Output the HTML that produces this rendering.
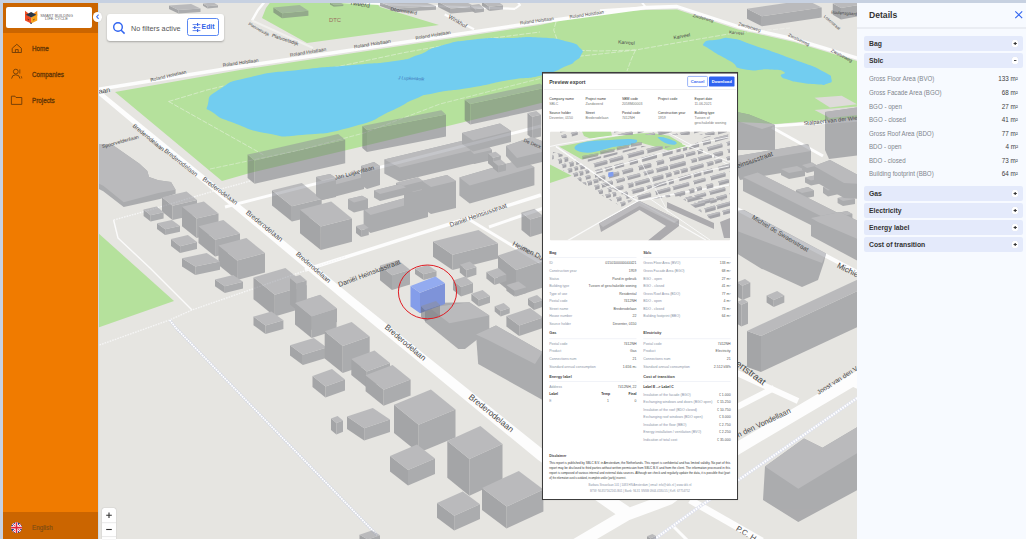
<!DOCTYPE html><html><head><meta charset="utf-8"><title>SBLC map</title><style>

*{margin:0;padding:0;box-sizing:border-box}
html,body{width:1026px;height:541px;overflow:hidden;background:#fff;font-family:"Liberation Sans",sans-serif}
#frame{position:absolute;left:0;top:0;width:1026px;height:539px;background:#c7d1e1}
#map{position:absolute;left:97px;top:3px;width:760px;height:536px;overflow:hidden;background:#e6e5e1}
#map svg{position:absolute;left:-97px;top:-3px}
#side{position:absolute;left:3px;top:3px;width:94.6px;height:536px;background:#f07b00}
#side .hdr{position:absolute;left:0;top:0;width:94.6px;height:30px;background:#cb6500}
#side .logo{position:absolute;left:3px;top:4px;width:86px;height:21px;background:#fff;border-radius:2px}
#side .ftr{position:absolute;left:0;top:509px;width:94.6px;height:27px;background:#cb6500}
.nav{position:absolute;left:29px;font-size:7px;font-weight:normal;color:#633505;letter-spacing:0;transform:scaleX(0.9);transform-origin:0 50%;-webkit-text-stroke:0.3px #633505}
.collapse{position:absolute;left:92.7px;top:12.2px;width:9.8px;height:9.8px;border-radius:50%;background:#fff;box-shadow:0 0 1px rgba(0,0,0,.2)}
#panel{position:absolute;left:857px;top:3px;width:169px;height:536px;background:#f7faff}
#panel .ttl{position:absolute;left:12px;top:6.5px;font-size:8.6px;font-weight:bold;color:#333}
#panel .div{position:absolute;left:0;top:24.2px;width:169px;height:1.4px;background:#eaedf3}
.bar{position:absolute;left:7px;width:159px;height:15px;background:#e4eafb;border-radius:2px}
.bar span{position:absolute;left:5px;top:4px;font-size:6.8px;font-weight:bold;color:#333}
.bar i{position:absolute;left:148px;top:4.2px;width:6.4px;height:7px;background:#fff;border-radius:1.5px;box-shadow:0 0 0.6px rgba(0,0,0,.18)}
.row{position:absolute;left:12px;width:149px;font-size:7px;color:#80858d;height:9px}
.row span{position:absolute;left:0;top:0;transform:scaleX(0.88);transform-origin:0 50%;white-space:nowrap}
.row b{position:absolute;right:0;top:0;font-weight:normal;color:#404040;transform:scaleX(0.9);transform-origin:100% 50%;white-space:nowrap}
#search{position:absolute;left:107px;top:14px;width:117px;height:27px;background:#fff;border-radius:3px;box-shadow:0 1px 2px rgba(0,0,0,.28)}
#search .txt{position:absolute;left:24px;top:9.5px;font-size:7.25px;color:#555}
#search .edit{position:absolute;left:80px;top:4.2px;width:32px;height:18.2px;border:1px solid #5a88f2;border-radius:2.5px}
#search .edit span{position:absolute;left:13.6px;top:4.2px;font-size:6.8px;font-weight:bold;color:#2f5fe8}
#zoom{position:absolute;left:102px;top:508px;width:14px;height:31px;background:#fff;border-radius:2px 2px 0 0;box-shadow:0 0 1px rgba(0,0,0,.35)}

</style></head><body>
<div id="frame"></div>
<div id="map"><svg width="1026" height="541" viewBox="0 0 1026 541"><rect x="0" y="0" width="1026" height="541" fill="#e6e5e1"/><polygon points="115,92 240,70 540,25 600,12 646,10 677,9.5 738,29.5 794,42 860,62 860,117 776,124 738,122 541,103 452,125 364,146 250,173 222,181" fill="#b5e19c"/><polygon points="272,0 374,0 380,7 439,25 307,43 262,18 266,8" fill="#b5e19c"/><polygon points="97,232 174,301 97,328" fill="#b5e19c"/><polygon points="814.5,97.8 841.7,95.8 857,104.2 829.9,107.5" fill="#dedbd9"/><polygon points="814.5,110 857,106.5 857,115 830,118" fill="#dedbd9"/><path d="M168.6 101.5 L207 90 L240 82 L328 68.7 L404 52.6 L470 41 L540 32" stroke="#f4f6f1" stroke-width="0.8" fill="none" stroke-linejoin="round" stroke-dasharray="5 1.5" opacity="0.6"/><path d="M168.6 101.5 L263.4 154.8" stroke="#f4f6f1" stroke-width="0.8" fill="none" stroke-linejoin="round" stroke-dasharray="5 1.5" opacity="0.6"/><path d="M210 169 L300 150 L364 133 L440 104 L542 78" stroke="#f4f6f1" stroke-width="0.7" fill="none" stroke-linejoin="round" stroke-dasharray="5 1.5" opacity="0.6"/><path d="M556 22 L553.7 30 L558 42 L568 50 L600 51 L635.5 50 L681.5 42 L731.7 33.5 L790 28" stroke="#f4f6f1" stroke-width="0.8" fill="none" stroke-linejoin="round" stroke-dasharray="5 1.5" opacity="0.6"/><path d="M635.5 50 L631 60 L627 71" stroke="#f4f6f1" stroke-width="0.8" fill="none" stroke-linejoin="round" stroke-dasharray="5 1.5" opacity="0.6"/><path d="M430 71 L500 64 L556 58.7 L600 54 L635.5 50" stroke="#f4f6f1" stroke-width="0.8" fill="none" stroke-linejoin="round" stroke-dasharray="5 1.5" opacity="0.6"/><path d="M208 104 C210.1 96 205.7 98 220 89 C234.3 80 223.7 83.5 251 77 C278.3 70.5 268 73.6 302 69.6 C336 65.6 322 67.9 353 65 C384 62.1 373.3 64.3 395 61 C416.7 57.7 403 60 418 55 C433 50 421.3 51.2 440 46 C458.7 40.8 451 42.2 474 39.5 C497 36.8 487 38.7 509 38 C531 37.3 520.7 36.3 540 37.5 C559.3 38.7 553.7 38 567 41.5 C580.3 45 575.3 43.5 580 48 C584.7 52.5 582.7 50.7 581 55 C579.3 59.3 579.7 57.4 575 61 C570.3 64.6 578.3 61 567 65.8 C555.7 70.6 560.3 70.7 541 75.4 C521.7 80.1 531.7 76 509 80 C486.3 84 497.7 83 473 87.3 C448.3 91.6 454.3 89.1 435 93 C415.7 96.9 429.7 93 415 99 C400.3 105 411.5 101.8 391 111 C370.5 120.2 383.2 118.5 353.5 126.5 C323.8 134.5 330.5 132.7 302 135 C273.5 137.3 290.7 137.4 268 133.4 C245.3 129.4 252.1 129.8 234 123 C215.9 116.2 222.3 119.3 213.6 113 C204.9 106.7 205.9 112 208 104Z" fill="#72cdf0"/><path d="M704 43 C706.3 39.5 708.3 40.9 718 39.5 C727.7 38.1 720.7 36.7 733 38.8 C745.3 40.9 734.7 38.8 755 45.7 C775.3 52.6 771.8 51.3 794 59.6 C816.2 67.9 809.2 64.2 821.7 70.7 C834.2 77.2 830 74.6 831.4 79 C832.8 83.4 830.1 82.2 826 84 C821.9 85.8 827.7 85 819 84.5 C810.3 84 810 84 800 82.5 C790 81 795.3 82.2 789 80 C782.7 77.8 782.7 78.7 781 76 C779.3 73.3 787.7 74.2 784 72 C780.3 69.8 783.3 70.4 770 69.5 C756.7 68.6 757.3 72.1 744 69.3 C730.7 66.5 741 67.4 730 61 C719 54.6 719.7 56 711 50 C702.3 44 701.7 46.5 704 43Z" fill="#72cdf0"/><path d="M97 89.5 L240 66.5 L540 22 L646 7.5 L677 6.5 L738 26.5 L794 39 L860 59" stroke="#fdfdfd" stroke-width="3.4" fill="none" stroke-linejoin="round"/><path d="M600 10.5 L646 7.5" stroke="#fdfdfd" stroke-width="2.5" fill="none" stroke-linejoin="round"/><path d="M266 0 L258 10 L252 20.5" stroke="#fdfdfd" stroke-width="2.4" fill="none" stroke-linejoin="round"/><path d="M252 20.5 L313 48" stroke="#f1f1ee" stroke-width="2" fill="none" stroke-linejoin="round"/><path d="M340 2 L400 5 L515 8.8" stroke="#fdfdfd" stroke-width="2.2" fill="none" stroke-linejoin="round"/><path d="M444.7 14.6 L474 29.2" stroke="#fdfdfd" stroke-width="2.2" fill="none" stroke-linejoin="round"/><path d="M515 8.8 L520 5 L516 0" stroke="#fdfdfd" stroke-width="2" fill="none" stroke-linejoin="round"/><path d="M640 0 L646 7.5" stroke="#fdfdfd" stroke-width="2" fill="none" stroke-linejoin="round"/><polygon points="95.6,92.7 347.3,303.3 537.8,459.7 622.1,518.8 629.9,507.2 544.2,450.3 352.7,296.7 98.4,89.3" fill="#fdfdfd"/><path d="M225 207 L541 126" stroke="#fdfdfd" stroke-width="3" fill="none" stroke-linejoin="round"/><path d="M305 270 L541 195" stroke="#fdfdfd" stroke-width="3.5" fill="none" stroke-linejoin="round"/><path d="M470 220 L541 263" stroke="#fdfdfd" stroke-width="3" fill="none" stroke-linejoin="round"/><path d="M489 227 L544 208" stroke="#fdfdfd" stroke-width="3" fill="none" stroke-linejoin="round"/><path d="M774 126 L860 120" stroke="#fdfdfd" stroke-width="3" fill="none" stroke-linejoin="round"/><path d="M772 127.5 L823 156" stroke="#fdfdfd" stroke-width="3" fill="none" stroke-linejoin="round"/><path d="M737 209 L860 273.7" stroke="#fdfdfd" stroke-width="4" fill="none" stroke-linejoin="round"/><path d="M737 373 L798 401" stroke="#fdfdfd" stroke-width="6" fill="none" stroke-linejoin="round"/><path d="M737 407 L774 388" stroke="#fdfdfd" stroke-width="6" fill="none" stroke-linejoin="round"/><path d="M575 545 L626 515 L669 499 L738 448 L860 376" stroke="#fdfdfd" stroke-width="12" fill="none" stroke-linejoin="round"/><path d="M690 500 L762 541" stroke="#fdfdfd" stroke-width="7" fill="none" stroke-linejoin="round"/><path d="M673 526 L688 541" stroke="#fdfdfd" stroke-width="3" fill="none" stroke-linejoin="round"/><path d="M845 381 L860 388" stroke="#fdfdfd" stroke-width="4" fill="none" stroke-linejoin="round"/><path d="M652 541 L699 507 L737 481 L860 396" stroke="#dfe2ee" stroke-width="3.2" fill="none" stroke-linejoin="round"/><path d="M652 541 L699 507 L737 481 L860 396" stroke="#ffffff" stroke-width="2.2" fill="none" stroke-linejoin="round" stroke-dasharray="1.6 1.1"/><path d="M113.6 220 L118 238 L150 268 L192 310" stroke="#fbfbfb" stroke-width="1.4" fill="none" stroke-linejoin="round"/><path d="M113.6 220 L150 210 L207 193 L250 181" stroke="#f6f6f6" stroke-width="1.3" fill="none" stroke-linejoin="round" stroke-dasharray="1.6 1.1"/><path d="M99.5 345 L169.6 320 L192 310 L307 270 L345 257" stroke="#f6f6f6" stroke-width="1.3" fill="none" stroke-linejoin="round" stroke-dasharray="1.6 1.1"/><path d="M169.6 320 L176 328 L270 425 L377.4 535.4" stroke="#d3d7e3" stroke-width="2.8" fill="none" stroke-linejoin="round"/><path d="M169.6 320 L176 328 L270 425 L377.4 535.4" stroke="#ffffff" stroke-width="1.8" fill="none" stroke-linejoin="round" stroke-dasharray="1.8 0.7"/><g opacity="0.5"><polygon points="169,5.4 178.4,9.9 178.4,13.5 169,9" fill="#64666e"/><polygon points="178.4,9.9 200.5,8.5 200.5,12.1 178.4,13.5" fill="#72747c"/><polygon points="169,5.4 191.1,4 200.5,8.5 178.4,9.9" fill="#8f9199"/><polygon points="203,3.4 207.5,6.2 207.5,8.5 203,5.7" fill="#64666e"/><polygon points="207.5,6.2 218,5.3 218,7.6 207.5,8.5" fill="#72747c"/><polygon points="203,3.4 213.5,2.5 218,5.3 207.5,6.2" fill="#8f9199"/><polygon points="273.4,7.6 282.1,13.2 282.1,18.3 273.4,12.6" fill="#64666e"/><polygon points="282.1,13.2 308.4,10.7 308.4,15.7 282.1,18.3" fill="#72747c"/><polygon points="273.4,7.6 299.6,5 308.4,10.7 282.1,13.2" fill="#8f9199"/><polygon points="330,2.7 334,4.9 334,6.7 330,4.5" fill="#64666e"/><polygon points="334,4.9 343.3,4.2 343.3,6 334,6.7" fill="#72747c"/><polygon points="330,2.7 339.3,2 343.3,4.2 334,4.9" fill="#8f9199"/><polygon points="380,2.2 396.8,8.4 396.8,12 380,5.9" fill="#64666e"/><polygon points="396.8,8.4 436,6.1 436,9.8 396.8,12" fill="#72747c"/><polygon points="380,2.2 419.2,0 436,6.1 396.8,8.4" fill="#8f9199"/><polygon points="438,1.9 450.9,8.4 450.9,13.5 438,7.1" fill="#64666e"/><polygon points="450.9,8.4 475,6.4 475,11.6 450.9,13.5" fill="#72747c"/><polygon points="438,1.9 462.1,0 475,6.4 450.9,8.4" fill="#8f9199"/><polygon points="470,5.2 474.9,9.2 474.9,13 470,9" fill="#64666e"/><polygon points="474.9,9.2 484,8 484,11.8 474.9,13" fill="#72747c"/><polygon points="470,5.2 479.1,4 484,8 474.9,9.2" fill="#8f9199"/><polygon points="482,1.6 489.4,6.8 489.4,11 482,5.8" fill="#64666e"/><polygon points="489.4,6.8 503,5.2 503,9.4 489.4,11" fill="#72747c"/><polygon points="482,1.6 495.6,0 503,5.2 489.4,6.8" fill="#8f9199"/><polygon points="747,8.7 761.9,16.3 761.9,26.3 747,18.7" fill="#64666e"/><polygon points="761.9,16.3 821.7,7.6 821.7,17.6 761.9,26.3" fill="#72747c"/><polygon points="747,8.7 806.8,0 821.7,7.6 761.9,16.3" fill="#8f9199"/><polygon points="832.8,3.5 841,8.1 841,19.4 832.8,14.8" fill="#64666e"/><polygon points="841,8.1 860,4.6 860,15.9 841,19.4" fill="#72747c"/><polygon points="832.8,3.5 851.8,0 860,4.6 841,8.1" fill="#8f9199"/><polygon points="247.6,154.6 254.6,160.4 254.6,183.8 247.6,178" fill="#64666e"/><polygon points="254.6,160.4 345.2,139.8 345.2,163.2 254.6,183.8" fill="#72747c"/><polygon points="247.6,154.6 338.2,134 345.2,139.8 254.6,160.4" fill="#8f9199"/><polygon points="362.3,125.9 367,130 367,152 362.3,147.9" fill="#64666e"/><polygon points="367,130 446,114.4 446,136.4 367,152" fill="#72747c"/><polygon points="362.3,125.9 441.3,110.3 446,114.4 367,130" fill="#8f9199"/><polygon points="464.7,99.8 470.3,104 470.3,124.5 464.7,120.3" fill="#64666e"/><polygon points="470.3,104 545.6,87.7 545.6,108.2 470.3,124.5" fill="#72747c"/><polygon points="464.7,99.8 540,83.5 545.6,87.7 470.3,104" fill="#8f9199"/><polygon points="97,144 112.7,145 139.5,163.8 147.3,170.9 149,177 158.3,180.3 171,182 175.6,189.7 175.6,193.7 160,199 123.7,207 103.3,191.3 97,188" fill="#72747c"/><polygon points="97,144 112.7,145 139.5,163.8 147.3,170.9 149,177 158.3,180.3 171,182 175.6,189.7 158.3,193 123.7,202.3 103.3,185.8 97,182.7" fill="#8f9199"/><polygon points="162,197.2 172.5,205.7 172.5,220 162,211.5" fill="#64666e"/><polygon points="172.5,205.7 197,200.1 197,214.4 172.5,220" fill="#72747c"/><polygon points="162,197.2 186.5,191.6 197,200.1 172.5,205.7" fill="#8f9199"/><polygon points="182,206.8 196.6,218.6 196.6,238 182,226.2" fill="#64666e"/><polygon points="196.6,218.6 218.5,213.4 218.5,232.8 196.6,238" fill="#72747c"/><polygon points="182,206.8 203.9,201.6 218.5,213.4 196.6,218.6" fill="#8f9199"/><polygon points="198.5,226.3 215.1,239.7 215.1,256.5 198.5,243.1" fill="#64666e"/><polygon points="215.1,239.7 240,233.4 240,250.2 215.1,256.5" fill="#72747c"/><polygon points="198.5,226.3 223.4,220 240,233.4 215.1,239.7" fill="#8f9199"/><polygon points="218.5,245.5 237.1,260.5 237.1,280 218.5,264.9" fill="#64666e"/><polygon points="237.1,260.5 265,253.1 265,272.5 237.1,280" fill="#72747c"/><polygon points="218.5,245.5 246.4,238 265,253.1 237.1,260.5" fill="#8f9199"/><polygon points="253.5,277.4 274.8,294.7 274.8,316.4 253.5,299.2" fill="#64666e"/><polygon points="274.8,294.7 306.7,285.2 306.7,307 274.8,316.4" fill="#72747c"/><polygon points="253.5,277.4 285.4,268 306.7,285.2 274.8,294.7" fill="#8f9199"/><polygon points="295,302.7 311.8,316.3 311.8,330 295,316.4" fill="#64666e"/><polygon points="311.8,316.3 337,308.4 337,322.1 311.8,330" fill="#72747c"/><polygon points="295,302.7 320.2,294.8 337,308.4 311.8,316.3" fill="#8f9199"/><polygon points="253.5,316.6 265.5,325.4 265.5,334 253.5,325.2" fill="#64666e"/><polygon points="265.5,325.4 283.4,320.3 283.4,328.9 265.5,334" fill="#72747c"/><polygon points="253.5,316.6 271.4,311.5 283.4,320.3 265.5,325.4" fill="#8f9199"/><polygon points="143.6,209.6 150.6,215.2 150.6,221.6 143.6,215.9" fill="#64666e"/><polygon points="150.6,215.2 163.6,212.3 163.6,218.6 150.6,221.6" fill="#72747c"/><polygon points="143.6,209.6 156.6,206.6 163.6,212.3 150.6,215.2" fill="#8f9199"/><polygon points="157,223.3 165.1,229.3 165.1,235 157,229" fill="#64666e"/><polygon points="165.1,229.3 180,226 180,231.7 165.1,235" fill="#72747c"/><polygon points="157,223.3 171.9,220 180,226 165.1,229.3" fill="#8f9199"/><polygon points="171,239.1 180.1,246.2 180.1,253 171,245.9" fill="#64666e"/><polygon points="180.1,246.2 197,242.1 197,248.9 180.1,253" fill="#72747c"/><polygon points="171,239.1 187.9,235 197,242.1 180.1,246.2" fill="#8f9199"/><polygon points="182,258.2 195.3,266.6 195.3,275 182,266.5" fill="#64666e"/><polygon points="195.3,266.6 220,261.5 220,269.8 195.3,275" fill="#72747c"/><polygon points="182,258.2 206.7,253 220,261.5 195.3,266.6" fill="#8f9199"/><polygon points="215,279.4 224.8,286.2 224.8,293 215,286.2" fill="#64666e"/><polygon points="224.8,286.2 243,281.8 243,288.6 224.8,293" fill="#72747c"/><polygon points="215,279.4 233.2,275 243,281.8 224.8,286.2" fill="#8f9199"/><polygon points="272,190.2 291.9,206.3 291.9,221.6 272,205.5" fill="#64666e"/><polygon points="291.9,206.3 321.7,199.1 321.7,214.4 291.9,221.6" fill="#72747c"/><polygon points="272,190.2 301.8,183 321.7,199.1 291.9,206.3" fill="#8f9199"/><polygon points="527.5,113 532.2,116.8 532.2,138.5 527.5,134.7" fill="#64666e"/><polygon points="532.2,116.8 541,114.8 541,136.5 532.2,138.5" fill="#72747c"/><polygon points="527.5,113 536.3,111 541,114.8 532.2,116.8" fill="#8f9199"/><polygon points="521.5,212.6 530.1,219.5 530.1,237 521.5,230" fill="#64666e"/><polygon points="530.1,219.5 543,215.7 543,233.1 530.1,237" fill="#72747c"/><polygon points="521.5,212.6 534.4,208.7 543,215.7 530.1,219.5" fill="#8f9199"/><polygon points="433,241.6 452.5,254.8 452.5,270 433,256.8" fill="#64666e"/><polygon points="452.5,254.8 498,243.2 498,258.4 452.5,270" fill="#72747c"/><polygon points="433,241.6 478.5,230 498,243.2 452.5,254.8" fill="#8f9199"/><polygon points="498,255.5 516,270 516,296.5 498,281.9" fill="#64666e"/><polygon points="516,270 543,261.1 543,287.5 516,296.5" fill="#72747c"/><polygon points="498,255.5 525,246.5 543,261.1 516,270" fill="#8f9199"/><polygon points="380,265.5 392,275.2 392,290 380,280.3" fill="#64666e"/><polygon points="392,275.2 410,269.7 410,284.5 392,290" fill="#72747c"/><polygon points="380,265.5 398,260 410,269.7 392,275.2" fill="#8f9199"/><polygon points="415,268.4 423.6,274.3 423.6,280 415,274.1" fill="#64666e"/><polygon points="423.6,274.3 436.5,270.9 436.5,276.6 423.6,280" fill="#72747c"/><polygon points="415,268.4 427.9,265 436.5,270.9 423.6,274.3" fill="#8f9199"/><polygon points="459.8,264.7 466.4,270.1 466.4,278 459.8,272.6" fill="#64666e"/><polygon points="466.4,270.1 476.4,266.9 476.4,274.8 466.4,278" fill="#72747c"/><polygon points="459.8,264.7 469.8,261.5 476.4,266.9 466.4,270.1" fill="#8f9199"/><polygon points="486.4,272 494.4,278.4 494.4,285 486.4,278.5" fill="#64666e"/><polygon points="494.4,278.4 506.4,274.5 506.4,281 494.4,285" fill="#72747c"/><polygon points="486.4,272 498.4,268 506.4,274.5 494.4,278.4" fill="#8f9199"/><polygon points="453,280.5 461,286.9 461,296.5 453,290" fill="#64666e"/><polygon points="461,286.9 473,283 473,292.5 461,296.5" fill="#72747c"/><polygon points="453,280.5 465,276.5 473,283 461,286.9" fill="#8f9199"/><polygon points="471.4,293.8 478.8,299.8 478.8,306.5 471.4,300.5" fill="#64666e"/><polygon points="478.8,299.8 490,296 490,302.7 478.8,306.5" fill="#72747c"/><polygon points="471.4,293.8 482.6,290 490,296 478.8,299.8" fill="#8f9199"/><polygon points="506.4,285.1 514.4,290.8 514.4,296.5 506.4,290.8" fill="#64666e"/><polygon points="514.4,290.8 526.4,287.2 526.4,292.9 514.4,296.5" fill="#72747c"/><polygon points="506.4,285.1 518.4,281.5 526.4,287.2 514.4,290.8" fill="#8f9199"/><polygon points="528,298.2 534,303.1 534,310 528,305.1" fill="#64666e"/><polygon points="534,303.1 543,299.9 543,306.8 534,310" fill="#72747c"/><polygon points="528,298.2 537,295 543,299.9 534,303.1" fill="#8f9199"/><polygon points="494.7,306.2 500.7,311.1 500.7,316.4 494.7,311.5" fill="#64666e"/><polygon points="500.7,311.1 509.7,307.9 509.7,313.2 500.7,316.4" fill="#72747c"/><polygon points="494.7,306.2 503.7,303 509.7,307.9 500.7,311.1" fill="#8f9199"/><polygon points="506.4,316 519.2,325.4 519.2,336 506.4,326.6" fill="#64666e"/><polygon points="519.2,325.4 543,317.4 543,328 519.2,336" fill="#72747c"/><polygon points="506.4,316 530.2,308 543,317.4 519.2,325.4" fill="#8f9199"/><polygon points="290,278 296.6,283.4 296.6,310 290,304.6" fill="#64666e"/><polygon points="296.6,283.4 306.6,280.4 306.6,307 296.6,310" fill="#72747c"/><polygon points="290,278 300,275 306.6,280.4 296.6,283.4" fill="#8f9199"/><polygon points="295,302.9 311.6,316.4 311.6,338 295,324.5" fill="#64666e"/><polygon points="311.6,316.4 336.6,308.5 336.6,330.1 311.6,338" fill="#72747c"/><polygon points="295,302.9 320,295 336.6,308.5 311.6,316.4" fill="#8f9199"/><polygon points="290,345.3 302.9,354.7 302.9,365 290,355.6" fill="#64666e"/><polygon points="302.9,354.7 326.8,347.4 326.8,357.7 302.9,365" fill="#72747c"/><polygon points="290,345.3 313.9,338 326.8,347.4 302.9,354.7" fill="#8f9199"/><polygon points="324.7,331.3 342.7,345.9 342.7,373 324.7,358.4" fill="#64666e"/><polygon points="342.7,345.9 369.7,336.6 369.7,363.7 342.7,373" fill="#72747c"/><polygon points="324.7,331.3 351.7,322 369.7,336.6 342.7,345.9" fill="#8f9199"/><polygon points="351.3,359 366.8,371.6 366.8,387.4 351.3,374.9" fill="#64666e"/><polygon points="366.8,371.6 390,363.1 390,379 366.8,387.4" fill="#72747c"/><polygon points="351.3,359 374.5,350.6 390,363.1 366.8,371.6" fill="#8f9199"/><polygon points="365.6,375.2 383.6,389.8 383.6,405.8 365.6,391.2" fill="#64666e"/><polygon points="383.6,389.8 410.6,379.6 410.6,395.6 383.6,405.8" fill="#72747c"/><polygon points="365.6,375.2 392.6,365 410.6,379.6 383.6,389.8" fill="#8f9199"/><polygon points="312.5,376.1 325.5,386.6 325.5,397.6 312.5,387.1" fill="#64666e"/><polygon points="325.5,386.6 345,379.5 345,390.5 325.5,397.6" fill="#72747c"/><polygon points="312.5,376.1 332,369 345,379.5 325.5,386.6" fill="#8f9199"/><polygon points="394,404.7 418.6,424.7 418.6,452.8 394,432.9" fill="#64666e"/><polygon points="418.6,424.7 455.5,409.4 455.5,437.6 418.6,452.8" fill="#72747c"/><polygon points="394,404.7 430.9,389.5 455.5,409.4 418.6,424.7" fill="#8f9199"/><polygon points="331,418.6 336.4,423 336.4,434.4 331,430" fill="#64666e"/><polygon points="336.4,423 343,420.4 343,431.8 336.4,434.4" fill="#72747c"/><polygon points="331,418.6 337.6,416 343,420.4 336.4,423" fill="#8f9199"/><polygon points="347,416.5 364.2,428.2 364.2,440.6 347,428.9" fill="#64666e"/><polygon points="364.2,428.2 390,419.6 390,432 364.2,440.6" fill="#72747c"/><polygon points="347,416.5 372.8,407.9 390,419.6 364.2,428.2" fill="#8f9199"/><polygon points="390,456 408,470 408,485.5 390,471.5" fill="#64666e"/><polygon points="408,470 435,458.6 435,474.1 408,485.5" fill="#72747c"/><polygon points="390,456 417,444.6 435,458.6 408,470" fill="#8f9199"/><polygon points="447.3,441.1 469.4,459 469.4,495.7 447.3,477.8" fill="#64666e"/><polygon points="469.4,459 502.5,443.9 502.5,480.6 469.4,495.7" fill="#72747c"/><polygon points="447.3,441.1 480.4,426 502.5,443.9 469.4,459" fill="#8f9199"/><polygon points="437,503 454.2,515.7 454.2,530.5 437,517.8" fill="#64666e"/><polygon points="454.2,515.7 480,504.3 480,519.1 454.2,530.5" fill="#72747c"/><polygon points="437,503 462.8,491.6 480,504.3 454.2,515.7" fill="#8f9199"/><polygon points="482,488 506.6,506.6 506.6,528.4 482,509.9" fill="#64666e"/><polygon points="506.6,506.6 543.4,489.5 543.4,511.4 506.6,528.4" fill="#72747c"/><polygon points="482,488 518.8,471 543.4,489.5 506.6,506.6" fill="#8f9199"/><polygon points="359.5,534.7 367.7,539.5 367.7,545 359.5,540.2" fill="#64666e"/><polygon points="367.7,539.5 380,535.3 380,540.8 367.7,545" fill="#72747c"/><polygon points="359.5,534.7 371.8,530.5 380,535.3 367.7,539.5" fill="#8f9199"/><polygon points="647,536.3 650.6,538.3 650.6,541 647,539" fill="#64666e"/><polygon points="650.6,538.3 656,536 656,538.7 650.6,541" fill="#72747c"/><polygon points="647,536.3 652.4,534 656,536 650.6,538.3" fill="#8f9199"/><polygon points="737,282.3 742.3,285.8 742.3,300 737,296.5" fill="#64666e"/><polygon points="742.3,285.8 750.3,282.5 750.3,296.7 742.3,300" fill="#72747c"/><polygon points="737,282.3 745,279 750.3,282.5 742.3,285.8" fill="#8f9199"/><polygon points="766.6,295.6 773.7,300.1 773.7,307 766.6,302.5" fill="#64666e"/><polygon points="773.7,300.1 784.3,295.5 784.3,302.4 773.7,307" fill="#72747c"/><polygon points="766.6,295.6 777.2,291 784.3,295.5 773.7,300.1" fill="#8f9199"/><polygon points="737,301.9 741.4,304.8 741.4,326.6 737,323.7" fill="#64666e"/><polygon points="741.4,304.8 748,301.9 748,323.7 741.4,326.6" fill="#72747c"/><polygon points="737,301.9 743.6,299 748,301.9 741.4,304.8" fill="#8f9199"/><polygon points="747,331 761,336 761,372 747,367" fill="#64666e"/><polygon points="761,336 870.7,285 870.7,321 761,372" fill="#72747c"/><polygon points="747,331 856.7,280 870.7,285 761,336" fill="#8f9199"/><polygon points="300,209.8 320.8,226.6 320.8,250 300,233.2" fill="#64666e"/><polygon points="320.8,226.6 352,218.4 352,241.8 320.8,250" fill="#72747c"/><polygon points="300,209.8 331.2,201.6 352,218.4 320.8,226.6" fill="#8f9199"/><polygon points="425,303 469.4,302.2 489.3,315.5 489.3,330 465,349 458.3,349 425,322" fill="#72747c"/><polygon points="429.4,307.7 469.4,302.2 489.3,315.5 449.4,323.3" fill="#8f9199"/><polygon points="476,334.4 496,325.5 542.6,352 542.6,400 478.2,364" fill="#72747c"/><polygon points="476,334.4 496,325.5 542.6,352 535,364 488,340" fill="#8f9199"/><polygon points="384.3,159.5 470,139 485,147 485,161 399.5,181.5 384.3,173.5" fill="#72747c"/><polygon points="384.3,159.5 470,139 485,147 399.5,167.5" fill="#8f9199"/><polygon points="470,150 488,146 492,150 492,160 474,164 470,160" fill="#72747c"/><polygon points="470,150 488,146 492,150 474,154" fill="#8f9199"/><polygon points="459.4,177.6 521.5,159.5 534.4,167.3 534.4,185.3 469.7,203.4 459.4,195.6" fill="#72747c"/><polygon points="459.4,177.6 521.5,159.5 534.4,167.3 469.7,185.4" fill="#8f9199"/><polygon points="462,133 500,123.5 511,131 511,142 473,151.5 462,144" fill="#72747c"/><polygon points="462,133 500,123.5 511,131 473,140.5" fill="#8f9199"/><polygon points="506,146 532,137 542,141 542,162 517,168 506,156" fill="#72747c"/><polygon points="506,146 532,137 542,141 542,152 517,158" fill="#8f9199"/><polygon points="488,153.6 493.1,157.7 493.1,167.3 488,163.2" fill="#64666e"/><polygon points="493.1,157.7 500.8,155.8 500.8,165.4 493.1,167.3" fill="#72747c"/><polygon points="488,153.6 495.7,151.7 500.8,155.8 493.1,157.7" fill="#8f9199"/><polygon points="493,161.5 498.2,165.7 498.2,172.4 493,168.2" fill="#64666e"/><polygon points="498.2,165.7 506,163.7 506,170.4 498.2,172.4" fill="#72747c"/><polygon points="493,161.5 500.8,159.5 506,163.7 498.2,165.7" fill="#8f9199"/><polygon points="316,183 358,172 364,177 364,189 322,200 316,195" fill="#72747c"/><polygon points="316,183 358,172 364,177 322,188" fill="#8f9199"/><polygon points="316,177 330,174 336,178 336,197 322,200 316,196" fill="#72747c"/><polygon points="316,177 330,174 336,178 322,181" fill="#8f9199"/><polygon points="361,166 374,162 380,166 380,185 367,189 361,185" fill="#72747c"/><polygon points="361,166 374,162 380,166 367,170" fill="#8f9199"/><polygon points="363.6,209.5 421,193.5 428,199 428,217 370.5,233 363.6,227.5" fill="#72747c"/><polygon points="363.6,209.5 421,193.5 428,199 370.5,215" fill="#8f9199"/><polygon points="404,186 447,176 456,182 456,203 413,213 404,207" fill="#72747c"/><polygon points="404,186 447,176 456,182 413,192" fill="#8f9199"/><polygon points="422,181 447,175 456,181 456,208 431,214 422,208" fill="#72747c"/><polygon points="422,181 447,175 456,181 431,187" fill="#8f9199"/><polygon points="396,183 418,177.5 423,181 423,189 401,194.5 396,191" fill="#72747c"/><polygon points="396,183 418,177.5 423,181 401,186.5" fill="#8f9199"/><polygon points="374,190.5 400,184 406,187.5 406,194.5 380,201 374,197.5" fill="#72747c"/><polygon points="374,190.5 400,184 406,187.5 380,194" fill="#8f9199"/><polygon points="348,199 362,195.7 368,199 368,209 354,212.5 348,209" fill="#72747c"/><polygon points="348,199 362,195.7 368,199 354,202.5" fill="#8f9199"/><polygon points="356,226.1 361.1,230.2 361.1,237 356,232.9" fill="#64666e"/><polygon points="361.1,230.2 368.8,228.1 368.8,234.9 361.1,237" fill="#72747c"/><polygon points="356,226.1 363.7,224 368.8,228.1 361.1,230.2" fill="#8f9199"/><polygon points="737,156 808,144 811,151 811,168 740,180 737,173" fill="#72747c"/><polygon points="737,156 808,144 811,151 740,163" fill="#8f9199"/><polygon points="825,112 860,107 860,155 829,159 825,150" fill="#72747c"/><polygon points="825,112 860,107 860,117 829,121" fill="#8f9199"/><polygon points="737,112 749,114.5 775,125 775,150 737,150" fill="#72747c"/><polygon points="737,112 749,114.5 775,125 762,129 737,121" fill="#8f9199"/><polygon points="781,169 797,166 805,170 805,176 789,179 781,175" fill="#72747c"/><polygon points="781,169 797,166 805,170 789,173" fill="#8f9199"/><polygon points="802,165 812,162.5 817,165.5 817,170.5 807,173 802,170" fill="#72747c"/><polygon points="802,165 812,162.5 817,165.5 807,168" fill="#8f9199"/><polygon points="805,177.5 817,175 823,178 823,183 811,185.5 805,182.5" fill="#72747c"/><polygon points="805,177.5 817,175 823,178 811,180.5" fill="#8f9199"/><polygon points="823,187 834,184.5 839,188 839,194 828,196.5 823,193" fill="#72747c"/><polygon points="823,187 834,184.5 839,188 828,190.5" fill="#8f9199"/><polygon points="837.6,198 850,196 855,199 855,204 843,206 837.6,203" fill="#72747c"/><polygon points="837.6,198 850,196 855,199 843,201" fill="#8f9199"/><polygon points="796,190 808,187 814,190.5 814,196.5 802,199 796,196" fill="#72747c"/><polygon points="796,190 808,187 814,190.5 802,193" fill="#8f9199"/><polygon points="834.6,213.5 847,211 852.4,214 852.4,220 840,222.5 834.6,219.5" fill="#72747c"/><polygon points="834.6,213.5 847,211 852.4,214 840,216.5" fill="#8f9199"/><polygon points="743,177 757.7,172.5 840,214 840,228 825.8,232.4 743,191" fill="#72747c"/><polygon points="743,177 757.7,172.5 840,214 825.8,218.4" fill="#8f9199"/><polygon points="737,211 744,210 826,253.6 824,262 818,280 802,287 761,268.4 737,253.6" fill="#72747c"/><polygon points="737,211 744,210 826,253.6 822,263 737,231" fill="#8f9199"/><polygon points="811,218 840,212 860,222 860,262 811,236" fill="#72747c"/><polygon points="811,218 840,212 860,222 860,240 818,222" fill="#8f9199"/><polygon points="814,166 830,160 860,176 860,199 844,198 814,181" fill="#72747c"/><polygon points="814,166 830,160 860,176 860,184 844,183" fill="#8f9199"/><polygon points="765,466.4 804,438.5 822.5,447.8 860,425.5 860,488.7 798.3,522 763,500" fill="#72747c"/><polygon points="765,466.4 804,438.5 822.5,447.8 860,425.5 860,451.5 798.3,488.7" fill="#8f9199"/></g><polygon points="410.5,286 420,292.7 420,313.3 410.5,306.6" fill="#849dea"/><polygon points="420,292.7 445,283.3 445,303.9 420,313.3" fill="#7e93d9"/><polygon points="410.5,286 435.5,276.6 445,283.3 420,292.7" fill="#93abf0"/><g opacity="0.5"><polygon points="421,306 425,310 425,321 421,317" fill="#64666e"/><polygon points="425,310 440,305 440,316 425,321" fill="#72747c"/><polygon points="421,306 436,301 440,305 425,310" fill="#8f9199"/></g><ellipse cx="427.5" cy="291.9" rx="29.1" ry="26.9" fill="none" stroke="#e01b22" stroke-width="1"/><g font-family="Liberation Sans" stroke="none"><text x="150.7" y="81.7" font-size="4.84" fill="#474747" transform="rotate(-13.2 150.7 81.7)" textLength="36.9" lengthAdjust="spacingAndGlyphs">Roland Holstlaan</text><text x="223" y="66.7" font-size="4.73" fill="#474747" transform="rotate(-8.0 223 66.7)" textLength="36" lengthAdjust="spacingAndGlyphs">Roland Holstlaan</text><text x="290.3" y="56.7" font-size="4.79" fill="#474747" transform="rotate(-9.5 290.3 56.7)" textLength="36.5" lengthAdjust="spacingAndGlyphs">Roland Holstlaan</text><text x="354.3" y="48.5" font-size="4.87" fill="#474747" transform="rotate(-9.0 354.3 48.5)" textLength="37.1" lengthAdjust="spacingAndGlyphs">Roland Holstlaan</text><text x="415.7" y="39.7" font-size="4.68" fill="#474747" transform="rotate(-9.7 415.7 39.7)" textLength="35.6" lengthAdjust="spacingAndGlyphs">Roland Holstlaan</text><text x="520.2" y="24.6" font-size="4.47" fill="#474747" transform="rotate(-7.8 520.2 24.6)" textLength="34" lengthAdjust="spacingAndGlyphs">Roland Holstlaan</text><text x="569.7" y="18.6" font-size="4.54" fill="#474747" transform="rotate(-8.6 569.7 18.6)" textLength="34.6" lengthAdjust="spacingAndGlyphs">Roland Holstlaan</text><text x="97.4" y="94" font-size="6.96" fill="#474747" transform="rotate(-8.7 97.4 94)" textLength="13.2" lengthAdjust="spacingAndGlyphs">laan</text><text x="132.2" y="126.4" font-size="5.95" fill="#474747" transform="rotate(39.8 132.2 126.4)" textLength="39.1" lengthAdjust="spacingAndGlyphs">Brederodelaan</text><text x="163.8" y="151.5" font-size="6.17" fill="#474747" transform="rotate(38.2 163.8 151.5)" textLength="40.5" lengthAdjust="spacingAndGlyphs">Brederodelaan</text><text x="202.1" y="180.1" font-size="6.37" fill="#474747" transform="rotate(36.7 202.1 180.1)" textLength="41.8" lengthAdjust="spacingAndGlyphs">Brederodelaan</text><text x="245.4" y="213.5" font-size="6.87" fill="#474747" transform="rotate(39.1 245.4 213.5)" textLength="45.1" lengthAdjust="spacingAndGlyphs">Brederodelaan</text><text x="295.4" y="254.8" font-size="6.65" fill="#474747" transform="rotate(40.8 295.4 254.8)" textLength="43.6" lengthAdjust="spacingAndGlyphs">Brederodelaan</text><text x="384.2" y="328.1" font-size="7.79" fill="#474747" transform="rotate(40.2 384.2 328.1)" textLength="51.1" lengthAdjust="spacingAndGlyphs">Brederodelaan</text><text x="468.1" y="397.9" font-size="8.39" fill="#474747" transform="rotate(39.1 468.1 397.9)" textLength="55" lengthAdjust="spacingAndGlyphs">Brederodelaan</text><text x="102.5" y="148.3" font-size="5.06" fill="#474747" transform="rotate(-15.3 102.5 148.3)" textLength="37.9" lengthAdjust="spacingAndGlyphs">Spoorveldenlaan</text><text x="335.3" y="179.7" font-size="5.83" fill="#474747" transform="rotate(-14.6 335.3 179.7)" textLength="40.5" lengthAdjust="spacingAndGlyphs">Jan Luijkenlaan</text><text x="450.6" y="227.1" font-size="6.35" fill="#474747" transform="rotate(-19.4 450.6 227.1)" textLength="60" lengthAdjust="spacingAndGlyphs">Daniël Heinsiusstraat</text><text x="339.2" y="287.1" font-size="6.97" fill="#474747" transform="rotate(-20.7 339.2 287.1)" textLength="65.9" lengthAdjust="spacingAndGlyphs">Daniël Heinsiusstraat</text><text x="511.9" y="245.2" font-size="6.71" fill="#474747" transform="rotate(26.6 511.9 245.2)" textLength="33.5" lengthAdjust="spacingAndGlyphs">Heimen Du</text><text x="523.3" y="141.6" font-size="4.79" fill="#474747" transform="rotate(22.4 523.3 141.6)" textLength="18.4" lengthAdjust="spacingAndGlyphs">De Deck</text><text x="803.9" y="125.3" font-size="5.61" fill="#474747" transform="rotate(-6.0 803.9 125.3)" textLength="55.2" lengthAdjust="spacingAndGlyphs">Stalpaert van der Wiel</text><text x="751.5" y="218.5" font-size="6.27" fill="#474747" transform="rotate(31.0 751.5 218.5)" textLength="64.8" lengthAdjust="spacingAndGlyphs">Michiel de Swaenstraat</text><text x="836.4" y="267.3" font-size="8.01" fill="#474747" transform="rotate(26.5 836.4 267.3)" textLength="24.9" lengthAdjust="spacingAndGlyphs">Michiel</text><text x="735" y="365" font-size="9.44" fill="#474747" transform="rotate(36.3 735 365)" textLength="34.6" lengthAdjust="spacingAndGlyphs">ertstraat</text><text x="818.8" y="394.7" font-size="6.53" fill="#474747" transform="rotate(-32.4 818.8 394.7)" textLength="46.8" lengthAdjust="spacingAndGlyphs">Joost van den V</text><text x="738.6" y="437.5" font-size="7.54" fill="#474747" transform="rotate(-25.4 738.6 437.5)" textLength="58.2" lengthAdjust="spacingAndGlyphs">n den Vondellaan</text><text x="735.6" y="530.1" font-size="7.73" fill="#474747" transform="rotate(31.3 735.6 530.1)" textLength="21.8" lengthAdjust="spacingAndGlyphs">P.C. H</text><text x="248.1" y="24.7" font-size="4.15" fill="#474747" transform="rotate(29.9 248.1 24.7)" textLength="23.3" lengthAdjust="spacingAndGlyphs">Platvoetsdijk</text><text x="271.4" y="36.7" font-size="4.98" fill="#474747" transform="rotate(18.6 271.4 36.7)" textLength="28" lengthAdjust="spacingAndGlyphs">Platvoetsdijk</text><text x="390.3" y="10.5" font-size="4.91" fill="#474747" transform="rotate(9.0 390.3 10.5)" textLength="26.7" lengthAdjust="spacingAndGlyphs">Doornweerd</text><text x="350.6" y="4.7" font-size="6.29" fill="#474747" transform="rotate(9.0 350.6 4.7)" textLength="19.2" lengthAdjust="spacingAndGlyphs">rweerd</text><text x="448" y="17.8" font-size="5.65" fill="#474747" transform="rotate(30.3 448 17.8)" textLength="20.4" lengthAdjust="spacingAndGlyphs">Winkhof</text><text x="329" y="22.1" font-size="5.84" fill="#9b6b5c" transform="rotate(0.0 329 22.1)" textLength="12" lengthAdjust="spacingAndGlyphs">DTC</text><text x="398.1" y="79.2" font-size="4.51" fill="#3b6db5" transform="rotate(3.0 398.1 79.2)" textLength="26.3" lengthAdjust="spacingAndGlyphs" font-style="italic">J Lupkenkolk</text><text x="617.9" y="43.4" font-size="4.91" fill="#474747" transform="rotate(4.8 617.9 43.4)" textLength="16.7" lengthAdjust="spacingAndGlyphs">Karveel</text><text x="673.7" y="39.2" font-size="4.97" fill="#474747" transform="rotate(-9.6 673.7 39.2)" textLength="16.8" lengthAdjust="spacingAndGlyphs">Karveel</text><text x="728.9" y="33.5" font-size="4.44" fill="#474747" transform="rotate(5.3 728.9 33.5)" textLength="15.1" lengthAdjust="spacingAndGlyphs">Karveel</text><text x="692.4" y="16.7" font-size="4.31" fill="#474747" transform="rotate(15.1 692.4 16.7)" textLength="21.5" lengthAdjust="spacingAndGlyphs">Zwolseweg</text><text x="738.1" y="25.2" font-size="4.65" fill="#474747" transform="rotate(17.3 738.1 25.2)" textLength="23.2" lengthAdjust="spacingAndGlyphs">Zwolseweg</text><text x="787.8" y="36.1" font-size="4.59" fill="#474747" transform="rotate(25.0 787.8 36.1)" textLength="23" lengthAdjust="spacingAndGlyphs">Zwolseweg</text><text x="830.6" y="51.5" font-size="4.70" fill="#474747" transform="rotate(27.9 830.6 51.5)" textLength="23.5" lengthAdjust="spacingAndGlyphs">Zwolseweg</text><text x="830.9" y="13.5" font-size="4.19" fill="#474747" transform="rotate(4.4 830.9 13.5)" textLength="26.1" lengthAdjust="spacingAndGlyphs">Boutensgaard</text><text x="823.6" y="17.1" font-size="4.00" fill="#474747" transform="rotate(40.5 823.6 17.1)" textLength="20" lengthAdjust="spacingAndGlyphs">Lokerstraat</text><text x="737.8" y="168.3" font-size="6.72" fill="#474747" transform="rotate(-19.7 737.8 168.3)" textLength="37.7" lengthAdjust="spacingAndGlyphs">einsiusstraat</text></g></svg></div>
<div style="position:absolute;left:97.6px;top:3px;width:1.3px;height:536px;background:#cfdce8"></div>
<div id="search">
<svg width="14" height="14" style="position:absolute;left:5px;top:7px"><circle cx="6" cy="6" r="4.3" stroke="#2f63f0" stroke-width="1.4" fill="none"/><path d="M9.2 9.2 L12.6 12.6" stroke="#2f63f0" stroke-width="1.5"/></svg>
<div class="txt">No filters active</div>
<div class="edit"><svg width="10" height="12" style="position:absolute;left:3.8px;top:3px"><path d="M0.6 2.6 H8.4 M0.6 5.6 H8.4 M0.6 8.6 H8.4" stroke="#2f5fe8" stroke-width="0.75"/><path d="M5.6 1.1 V4.1 M2.8 4.1 V7.1 M5.6 7.1 V10.1" stroke="#2f5fe8" stroke-width="1.1"/></svg><span>Edit</span></div>
</div>
<div id="zoom">
<svg width="14" height="31" style="position:absolute;left:0;top:0"><path d="M4.2 7.3 H9.8 M7 4.5 V10.1" stroke="#333" stroke-width="1.1"/><path d="M0 14.7 H14" stroke="#e2e2e2" stroke-width="0.8"/><path d="M4.2 21.5 H9.8" stroke="#333" stroke-width="1.1"/><path d="M0 28.6 H14" stroke="#e2e2e2" stroke-width="0.8"/></svg>
</div>
<div id="modal" style="position:absolute;left:542px;top:72px;width:196px;height:428px;background:#fff;border:1px solid #3c3c3c;box-shadow:0 0 1px rgba(0,0,0,.2)"><svg width="196" height="428" style="position:absolute;left:-1px;top:-1px;font-family:'Liberation Sans'"><text x="7.2" y="11.5" font-size="5.1" fill="#3a3a3a" text-anchor="start" font-weight="bold">Preview export</text><rect x="145.6" y="4.4" width="20" height="10.2" rx="1.2" fill="#fff" stroke="#7fa0f5" stroke-width="0.8"/><text x="155.6" y="10.9" font-size="4.2" fill="#3b6cf0" text-anchor="middle" font-weight="bold">Cancel</text><rect x="167" y="4.4" width="25.5" height="10.2" rx="1.2" fill="#2f63f0"/><text x="179.7" y="10.9" font-size="4.2" fill="#fff" text-anchor="middle" font-weight="bold">Download</text><rect x="2" y="17" width="192" height="0.6" fill="#e6e6e6"/><rect x="0" y="1" width="196" height="0.8" fill="#3c3c3c" opacity="0.7"/><text x="7.2" y="28" font-size="3.5" fill="#333" text-anchor="start">Company name</text><text x="7.2" y="32.8" font-size="3.5" fill="#777" text-anchor="start">SBLC</text><text x="43.4" y="28" font-size="3.5" fill="#333" text-anchor="start">Project name</text><text x="43.4" y="32.8" font-size="3.5" fill="#777" text-anchor="start">Zandweerd</text><text x="79.9" y="28" font-size="3.5" fill="#333" text-anchor="start">SBM code</text><text x="79.9" y="32.8" font-size="3.5" fill="#777" text-anchor="start">2058M00003</text><text x="115.9" y="28" font-size="3.5" fill="#333" text-anchor="start">Project code</text><text x="115.9" y="32.8" font-size="3.5" fill="#777" text-anchor="start"></text><text x="152.4" y="28" font-size="3.5" fill="#333" text-anchor="start">Export date</text><text x="152.4" y="32.8" font-size="3.5" fill="#777" text-anchor="start">11.06.2021</text><text x="7.2" y="41.6" font-size="3.5" fill="#333" text-anchor="start">Source holder</text><text x="7.2" y="46.5" font-size="3.5" fill="#777" text-anchor="start">Deventer, 0150</text><text x="43.4" y="41.6" font-size="3.5" fill="#333" text-anchor="start">Street</text><text x="43.4" y="46.5" font-size="3.5" fill="#777" text-anchor="start">Brederodelaan</text><text x="79.9" y="41.6" font-size="3.5" fill="#333" text-anchor="start">Postal code</text><text x="79.9" y="46.5" font-size="3.5" fill="#777" text-anchor="start">7412NH</text><text x="115.9" y="41.6" font-size="3.5" fill="#333" text-anchor="start">Construction year</text><text x="115.9" y="46.5" font-size="3.5" fill="#777" text-anchor="start">1959</text><text x="152.4" y="41.6" font-size="3.5" fill="#333" text-anchor="start">Building type</text><text x="152.4" y="46.5" font-size="3.5" fill="#777" text-anchor="start">Tussen of</text><text x="152.4" y="51.5" font-size="3.5" fill="#777" text-anchor="start">geschakelde woning</text><defs><clipPath id="tc"><rect x="550" y="131.4" width="180" height="109.2" rx="1"/></clipPath></defs><g clip-path="url(#tc)" transform="translate(-542 -72)"><rect x="550" y="131.4" width="180" height="109.2" fill="#e6e5e1"/><polygon points="559,146.5 600,139 636,133.5 652,133 669,135.8 689,147.6 669,150.4 640,142.5 581.8,159.4" fill="#b3df9a"/><polygon points="582,131.4 611,131.4 612,136 590,138.5 584,136" fill="#b3df9a"/><polygon points="550,164.5 571.7,175.8 550,183" fill="#b3df9a"/><path d="M574.5 147.6 C576 142 592 140.5 604 140.2 C618 139.5 630 138 636.5 139.7 C640 143 630 145.5 617 146.5 C606 147.5 598 152.8 587.5 152.7 C580 152.6 574 150.5 574.5 147.6 Z" fill="#70c9ee"/><path d="M657.5 137.5 C662 136 668 139 673 140.5 C678 142 678 144.8 673 144.8 C667 144.5 662 142 657.5 137.5 Z" fill="#70c9ee"/><path d="M550 146.5 L559 144.5 L600 137.5 L640 132.5 L652 131.4" stroke="#fafafa" stroke-width="0.9" fill="none"/><path d="M556 146.5 L618 190 L637.7 201 L705.8 240" stroke="#fafafa" stroke-width="1.2" fill="none"/><path d="M567.7 240.6 L600 222 L637.7 201 L680 193 L729 185" stroke="#fafafa" stroke-width="1.3" fill="none"/><path d="M648.4 197.6 L710 240" stroke="#fafafa" stroke-width="0.9" fill="none"/><path d="M669 133 L729 165" stroke="#fafafa" stroke-width="1" fill="none"/><g opacity="0.62"></g><defs><clipPath id="z0"><polygon points="586,160 642,146 690,147 705,137 730,131.4 730,200 700,205 680,196 640,200 631,198 600,182 595,172"/></clipPath><clipPath id="z1"><polygon points="553,152 572,157 600,177 633,200 622,207 598,193 560,168 552,160"/></clipPath><clipPath id="z2"><polygon points="560,131.4 580,131.4 576,139 562,138"/></clipPath><clipPath id="z3"><polygon points="614,131.4 730,131.4 728,135 614,135"/></clipPath><clipPath id="z4"><polygon points="679,196 730,200 730,215 712,220"/></clipPath></defs><g clip-path="url(#z0)"><polygon points="584.5,128.8 585.7,130.1 585.7,132.7 596.1,129.9 596.1,127.3 594.9,126" fill="#a4a4a9"/><polygon points="584.5,128.8 594.9,126 596.1,127.3 585.7,130.1" fill="#bdbdc1"/><polygon points="578.6,137.8 579.8,139.1 579.8,142 594.3,138.1 594.3,135.2 593.1,133.9" fill="#a4a4a9"/><polygon points="578.6,137.8 593.1,133.9 594.3,135.2 579.8,139.1" fill="#bdbdc1"/><polygon points="595.9,133.1 597.1,134.4 597.1,136.7 612.9,132.5 612.9,130.2 611.7,128.9" fill="#a4a4a9"/><polygon points="595.9,133.1 611.7,128.9 612.9,130.2 597.1,134.4" fill="#bdbdc1"/><polygon points="615.1,128 616.2,129.3 616.2,131.6 629.3,128.1 629.3,125.7 628.2,124.4" fill="#a4a4a9"/><polygon points="615.1,128 628.2,124.4 629.3,125.7 616.2,129.3" fill="#bdbdc1"/><polygon points="585.9,143.2 587.1,144.5 587.1,147 592.6,145.5 592.6,143 591.4,141.7" fill="#a4a4a9"/><polygon points="585.9,143.2 591.4,141.7 592.6,143 587.1,144.5" fill="#bdbdc1"/><polygon points="594.7,140.9 595.9,142.2 595.9,144.4 610.3,140.5 610.3,138.2 609.2,136.9" fill="#a4a4a9"/><polygon points="594.7,140.9 609.2,136.9 610.3,138.2 595.9,142.2" fill="#bdbdc1"/><polygon points="612.7,136 613.8,137.3 613.8,140.4 624.4,137.5 624.4,134.4 623.3,133.1" fill="#a4a4a9"/><polygon points="612.7,136 623.3,133.1 624.4,134.4 613.8,137.3" fill="#bdbdc1"/><polygon points="628.5,131.7 629.6,133 629.6,135.5 644,131.6 644,129.2 642.8,127.9" fill="#a4a4a9"/><polygon points="628.5,131.7 642.8,127.9 644,129.2 629.6,133" fill="#bdbdc1"/><polygon points="646.2,126.9 647.4,128.2 647.4,131.3 655.7,129.1 655.7,126 654.5,124.7" fill="#a4a4a9"/><polygon points="646.2,126.9 654.5,124.7 655.7,126 647.4,128.2" fill="#bdbdc1"/><polygon points="578,152.8 579.1,154.1 579.1,156.4 587.9,154 587.9,151.7 586.7,150.4" fill="#a4a4a9"/><polygon points="578,152.8 586.7,150.4 587.9,151.7 579.1,154.1" fill="#bdbdc1"/><polygon points="591.1,149.2 592.3,150.5 592.3,152.8 597,151.5 597,149.2 595.9,147.9" fill="#a4a4a9"/><polygon points="591.1,149.2 595.9,147.9 597,149.2 592.3,150.5" fill="#bdbdc1"/><polygon points="598.3,147.3 599.5,148.6 599.5,151.1 605.4,149.5 605.4,147 604.2,145.7" fill="#a4a4a9"/><polygon points="598.3,147.3 604.2,145.7 605.4,147 599.5,148.6" fill="#bdbdc1"/><polygon points="606,145.2 607.1,146.5 607.1,148.9 611.1,147.8 611.1,145.4 610,144.1" fill="#a4a4a9"/><polygon points="606,145.2 610,144.1 611.1,145.4 607.1,146.5" fill="#bdbdc1"/><polygon points="611.9,143.6 613.1,144.9 613.1,147.1 621.5,144.9 621.5,142.6 620.3,141.3" fill="#a4a4a9"/><polygon points="611.9,143.6 620.3,141.3 621.5,142.6 613.1,144.9" fill="#bdbdc1"/><polygon points="625.7,139.9 626.9,141.2 626.9,143.5 638.3,140.5 638.3,138.1 637.1,136.8" fill="#a4a4a9"/><polygon points="625.7,139.9 637.1,136.8 638.3,138.1 626.9,141.2" fill="#bdbdc1"/><polygon points="639.7,136.1 640.9,137.4 640.9,140 649.1,137.7 649.1,135.2 647.9,133.9" fill="#a4a4a9"/><polygon points="639.7,136.1 647.9,133.9 649.1,135.2 640.9,137.4" fill="#bdbdc1"/><polygon points="650,133.3 651.1,134.6 651.1,137.8 665.3,134 665.3,130.8 664.1,129.5" fill="#a4a4a9"/><polygon points="650,133.3 664.1,129.5 665.3,130.8 651.1,134.6" fill="#bdbdc1"/><polygon points="667.7,128.5 668.9,129.8 668.9,132.1 678.7,129.5 678.7,127.2 677.5,125.9" fill="#a4a4a9"/><polygon points="667.7,128.5 677.5,125.9 678.7,127.2 668.9,129.8" fill="#bdbdc1"/><polygon points="586.6,157.8 587.8,159.1 587.8,161.7 601.1,158.1 601.1,155.5 600,154.2" fill="#a4a4a9"/><polygon points="586.6,157.8 600,154.2 601.1,155.5 587.8,159.1" fill="#bdbdc1"/><polygon points="602.5,153.6 603.6,154.9 603.6,158 617.4,154.3 617.4,151.1 616.2,149.8" fill="#a4a4a9"/><polygon points="602.5,153.6 616.2,149.8 617.4,151.1 603.6,154.9" fill="#bdbdc1"/><polygon points="621.5,148.4 622.7,149.7 622.7,152.7 636.4,149 636.4,146 635.2,144.7" fill="#a4a4a9"/><polygon points="621.5,148.4 635.2,144.7 636.4,146 622.7,149.7" fill="#bdbdc1"/><polygon points="640,143.4 641.2,144.7 641.2,147.4 647.9,145.6 647.9,142.9 646.8,141.6" fill="#a4a4a9"/><polygon points="640,143.4 646.8,141.6 647.9,142.9 641.2,144.7" fill="#bdbdc1"/><polygon points="649.9,140.8 651,142.1 651,144.3 655.4,143.1 655.4,140.9 654.2,139.6" fill="#a4a4a9"/><polygon points="649.9,140.8 654.2,139.6 655.4,140.9 651,142.1" fill="#bdbdc1"/><polygon points="657,138.8 658.1,140.1 658.1,143 665.2,141.1 665.2,138.2 664.1,136.9" fill="#a4a4a9"/><polygon points="657,138.8 664.1,136.9 665.2,138.2 658.1,140.1" fill="#bdbdc1"/><polygon points="669.9,135.4 671,136.7 671,139.8 680.4,137.3 680.4,134.1 679.2,132.8" fill="#a4a4a9"/><polygon points="669.9,135.4 679.2,132.8 680.4,134.1 671,136.7" fill="#bdbdc1"/><polygon points="685.2,131.2 686.4,132.5 686.4,135.1 701.8,130.9 701.8,128.3 700.7,127" fill="#a4a4a9"/><polygon points="685.2,131.2 700.7,127 701.8,128.3 686.4,132.5" fill="#bdbdc1"/><polygon points="576.4,168 577.6,169.3 577.6,172.4 589.5,169.2 589.5,166.1 588.4,164.8" fill="#a4a4a9"/><polygon points="576.4,168 588.4,164.8 589.5,166.1 577.6,169.3" fill="#bdbdc1"/><polygon points="593.4,163.4 594.5,164.7 594.5,167.4 607.5,163.9 607.5,161.2 606.4,159.9" fill="#a4a4a9"/><polygon points="593.4,163.4 606.4,159.9 607.5,161.2 594.5,164.7" fill="#bdbdc1"/><polygon points="608.7,159.3 609.8,160.6 609.8,163.1 623.3,159.5 623.3,156.9 622.1,155.6" fill="#a4a4a9"/><polygon points="608.7,159.3 622.1,155.6 623.3,156.9 609.8,160.6" fill="#bdbdc1"/><polygon points="627.2,154.3 628.4,155.6 628.4,158.2 644.1,153.9 644.1,151.3 642.9,150" fill="#a4a4a9"/><polygon points="627.2,154.3 642.9,150 644.1,151.3 628.4,155.6" fill="#bdbdc1"/><polygon points="646.2,149.1 647.4,150.4 647.4,153.4 662.7,149.2 662.7,146.3 661.6,145" fill="#a4a4a9"/><polygon points="646.2,149.1 661.6,145 662.7,146.3 647.4,150.4" fill="#bdbdc1"/><polygon points="663.8,144.4 665,145.7 665,148 670.5,146.5 670.5,144.2 669.4,142.9" fill="#a4a4a9"/><polygon points="663.8,144.4 669.4,142.9 670.5,144.2 665,145.7" fill="#bdbdc1"/><polygon points="674.9,141.4 676.1,142.7 676.1,145 689.8,141.3 689.8,139 688.6,137.7" fill="#a4a4a9"/><polygon points="674.9,141.4 688.6,137.7 689.8,139 676.1,142.7" fill="#bdbdc1"/><polygon points="693.8,136.3 695,137.6 695,140.4 710.8,136.2 710.8,133.3 709.6,132" fill="#a4a4a9"/><polygon points="693.8,136.3 709.6,132 710.8,133.3 695,137.6" fill="#bdbdc1"/><polygon points="712.7,131.2 713.8,132.5 713.8,134.8 724.4,132 724.4,129.6 723.3,128.3" fill="#a4a4a9"/><polygon points="712.7,131.2 723.3,128.3 724.4,129.6 713.8,132.5" fill="#bdbdc1"/><polygon points="724.8,127.9 726,129.2 726,132.1 741.6,127.8 741.6,125 740.5,123.7" fill="#a4a4a9"/><polygon points="724.8,127.9 740.5,123.7 741.6,125 726,129.2" fill="#bdbdc1"/><polygon points="580.7,174.2 581.8,175.5 581.8,178.6 591,176.1 591,173.1 589.9,171.8" fill="#a4a4a9"/><polygon points="580.7,174.2 589.9,171.8 591,173.1 581.8,175.5" fill="#bdbdc1"/><polygon points="595.1,170.3 596.3,171.6 596.3,174.1 602.8,172.3 602.8,169.9 601.6,168.6" fill="#a4a4a9"/><polygon points="595.1,170.3 601.6,168.6 602.8,169.9 596.3,171.6" fill="#bdbdc1"/><polygon points="604.4,167.8 605.6,169.1 605.6,171.9 612.5,170 612.5,167.3 611.3,166" fill="#a4a4a9"/><polygon points="604.4,167.8 611.3,166 612.5,167.3 605.6,169.1" fill="#bdbdc1"/><polygon points="614,165.2 615.2,166.5 615.2,168.9 624.2,166.4 624.2,164.1 623,162.8" fill="#a4a4a9"/><polygon points="614,165.2 623,162.8 624.2,164.1 615.2,166.5" fill="#bdbdc1"/><polygon points="628.6,161.3 629.8,162.6 629.8,165.3 638,163 638,160.4 636.9,159.1" fill="#a4a4a9"/><polygon points="628.6,161.3 636.9,159.1 638,160.4 629.8,162.6" fill="#bdbdc1"/><polygon points="641,158 642.2,159.3 642.2,161.9 657,157.9 657,155.2 655.8,153.9" fill="#a4a4a9"/><polygon points="641,158 655.8,153.9 657,155.2 642.2,159.3" fill="#bdbdc1"/><polygon points="661.5,152.4 662.6,153.7 662.6,156.5 672.7,153.7 672.7,151 671.5,149.7" fill="#a4a4a9"/><polygon points="661.5,152.4 671.5,149.7 672.7,151 662.6,153.7" fill="#bdbdc1"/><polygon points="675.3,148.7 676.5,150 676.5,152.6 680.7,151.5 680.7,148.8 679.6,147.5" fill="#a4a4a9"/><polygon points="675.3,148.7 679.6,147.5 680.7,148.8 676.5,150" fill="#bdbdc1"/><polygon points="681.9,146.9 683.1,148.2 683.1,151.2 687.1,150.1 687.1,147.1 685.9,145.8" fill="#a4a4a9"/><polygon points="681.9,146.9 685.9,145.8 687.1,147.1 683.1,148.2" fill="#bdbdc1"/><polygon points="688.2,145.2 689.4,146.5 689.4,149.4 699.1,146.8 699.1,143.9 697.9,142.6" fill="#a4a4a9"/><polygon points="688.2,145.2 697.9,142.6 699.1,143.9 689.4,146.5" fill="#bdbdc1"/><polygon points="701.9,141.5 703.1,142.8 703.1,145.5 711,143.4 711,140.7 709.8,139.4" fill="#a4a4a9"/><polygon points="701.9,141.5 709.8,139.4 711,140.7 703.1,142.8" fill="#bdbdc1"/><polygon points="713.8,138.3 715,139.6 715,141.9 728.4,138.3 728.4,136 727.2,134.7" fill="#a4a4a9"/><polygon points="713.8,138.3 727.2,134.7 728.4,136 715,139.6" fill="#bdbdc1"/><polygon points="578.5,182.2 579.7,183.5 579.7,186.5 590.4,183.6 590.4,180.6 589.3,179.3" fill="#a4a4a9"/><polygon points="578.5,182.2 589.3,179.3 590.4,180.6 579.7,183.5" fill="#bdbdc1"/><polygon points="594.9,177.8 596.1,179.1 596.1,181.9 605.4,179.4 605.4,176.6 604.2,175.3" fill="#a4a4a9"/><polygon points="594.9,177.8 604.2,175.3 605.4,176.6 596.1,179.1" fill="#bdbdc1"/><polygon points="608,174.3 609.1,175.6 609.1,178.5 619.3,175.7 619.3,172.8 618.1,171.5" fill="#a4a4a9"/><polygon points="608,174.3 618.1,171.5 619.3,172.8 609.1,175.6" fill="#bdbdc1"/><polygon points="621.7,170.6 622.8,171.9 622.8,174.5 633.2,171.7 633.2,169.1 632.1,167.8" fill="#a4a4a9"/><polygon points="621.7,170.6 632.1,167.8 633.2,169.1 622.8,171.9" fill="#bdbdc1"/><polygon points="637.8,166.2 639,167.5 639,170.6 651.4,167.2 651.4,164.2 650.2,162.9" fill="#a4a4a9"/><polygon points="637.8,166.2 650.2,162.9 651.4,164.2 639,167.5" fill="#bdbdc1"/><polygon points="655.9,161.3 657.1,162.6 657.1,165.4 664.2,163.5 664.2,160.7 663,159.4" fill="#a4a4a9"/><polygon points="655.9,161.3 663,159.4 664.2,160.7 657.1,162.6" fill="#bdbdc1"/><polygon points="668.8,157.8 670,159.1 670,161.5 684,157.7 684,155.3 682.9,154" fill="#a4a4a9"/><polygon points="668.8,157.8 682.9,154 684,155.3 670,159.1" fill="#bdbdc1"/><polygon points="684.9,153.5 686.1,154.8 686.1,157.1 695.4,154.6 695.4,152.3 694.2,151" fill="#a4a4a9"/><polygon points="684.9,153.5 694.2,151 695.4,152.3 686.1,154.8" fill="#bdbdc1"/><polygon points="696.8,150.3 698,151.6 698,154.5 702.9,153.1 702.9,150.3 701.7,149" fill="#a4a4a9"/><polygon points="696.8,150.3 701.7,149 702.9,150.3 698,151.6" fill="#bdbdc1"/><polygon points="706.7,147.6 707.9,148.9 707.9,151.3 722.6,147.3 722.6,144.9 721.5,143.6" fill="#a4a4a9"/><polygon points="706.7,147.6 721.5,143.6 722.6,144.9 707.9,148.9" fill="#bdbdc1"/><polygon points="726.2,142.3 727.4,143.6 727.4,146 739.3,142.8 739.3,140.4 738.1,139.1" fill="#a4a4a9"/><polygon points="726.2,142.3 738.1,139.1 739.3,140.4 727.4,143.6" fill="#bdbdc1"/><polygon points="580.8,189 582,190.3 582,193.4 588.6,191.7 588.6,188.5 587.5,187.2" fill="#a4a4a9"/><polygon points="580.8,189 587.5,187.2 588.6,188.5 582,190.3" fill="#bdbdc1"/><polygon points="590.8,186.3 591.9,187.6 591.9,190.8 601.8,188.1 601.8,185 600.6,183.7" fill="#a4a4a9"/><polygon points="590.8,186.3 600.6,183.7 601.8,185 591.9,187.6" fill="#bdbdc1"/><polygon points="605.9,182.2 607,183.5 607,186.2 613,184.6 613,181.9 611.8,180.6" fill="#a4a4a9"/><polygon points="605.9,182.2 611.8,180.6 613,181.9 607,183.5" fill="#bdbdc1"/><polygon points="615.6,179.6 616.8,180.9 616.8,183.3 624.9,181.1 624.9,178.7 623.7,177.4" fill="#a4a4a9"/><polygon points="615.6,179.6 623.7,177.4 624.9,178.7 616.8,180.9" fill="#bdbdc1"/><polygon points="626.6,176.6 627.8,177.9 627.8,180.2 640.5,176.7 640.5,174.5 639.3,173.2" fill="#a4a4a9"/><polygon points="626.6,176.6 639.3,173.2 640.5,174.5 627.8,177.9" fill="#bdbdc1"/><polygon points="643.3,172.1 644.4,173.4 644.4,175.7 653.7,173.1 653.7,170.9 652.6,169.6" fill="#a4a4a9"/><polygon points="643.3,172.1 652.6,169.6 653.7,170.9 644.4,173.4" fill="#bdbdc1"/><polygon points="655.6,168.8 656.7,170.1 656.7,172.8 668.2,169.7 668.2,167 667,165.7" fill="#a4a4a9"/><polygon points="655.6,168.8 667,165.7 668.2,167 656.7,170.1" fill="#bdbdc1"/><polygon points="668.8,165.2 670,166.5 670,169.5 685.8,165.3 685.8,162.3 684.7,161" fill="#a4a4a9"/><polygon points="668.8,165.2 684.7,161 685.8,162.3 670,166.5" fill="#bdbdc1"/><polygon points="690.5,159.4 691.7,160.7 691.7,163.1 697,161.7 697,159.3 695.8,158" fill="#a4a4a9"/><polygon points="690.5,159.4 695.8,158 697,159.3 691.7,160.7" fill="#bdbdc1"/><polygon points="697.5,157.5 698.6,158.8 698.6,161.3 712,157.7 712,155.2 710.8,153.9" fill="#a4a4a9"/><polygon points="697.5,157.5 710.8,153.9 712,155.2 698.6,158.8" fill="#bdbdc1"/><polygon points="712.9,153.3 714.1,154.6 714.1,157.8 723.1,155.3 723.1,152.2 722,150.9" fill="#a4a4a9"/><polygon points="712.9,153.3 722,150.9 723.1,152.2 714.1,154.6" fill="#bdbdc1"/><polygon points="727.1,149.5 728.3,150.8 728.3,153.1 735.4,151.2 735.4,148.9 734.2,147.6" fill="#a4a4a9"/><polygon points="727.1,149.5 734.2,147.6 735.4,148.9 728.3,150.8" fill="#bdbdc1"/><polygon points="578.9,196.9 580,198.2 580,200.5 592.4,197.2 592.4,194.9 591.3,193.6" fill="#a4a4a9"/><polygon points="578.9,196.9 591.3,193.6 592.4,194.9 580,198.2" fill="#bdbdc1"/><polygon points="593,193.1 594.2,194.4 594.2,197 606.4,193.7 606.4,191.1 605.3,189.8" fill="#a4a4a9"/><polygon points="593,193.1 605.3,189.8 606.4,191.1 594.2,194.4" fill="#bdbdc1"/><polygon points="607.1,189.3 608.3,190.6 608.3,193.4 623.5,189.3 623.5,186.5 622.4,185.2" fill="#a4a4a9"/><polygon points="607.1,189.3 622.4,185.2 623.5,186.5 608.3,190.6" fill="#bdbdc1"/><polygon points="627.5,183.8 628.6,185.1 628.6,188.2 633.6,186.8 633.6,183.8 632.5,182.5" fill="#a4a4a9"/><polygon points="627.5,183.8 632.5,182.5 633.6,183.8 628.6,185.1" fill="#bdbdc1"/><polygon points="634.3,182 635.4,183.3 635.4,185.9 649.8,182 649.8,179.4 648.6,178.1" fill="#a4a4a9"/><polygon points="634.3,182 648.6,178.1 649.8,179.4 635.4,183.3" fill="#bdbdc1"/><polygon points="651.7,177.3 652.8,178.6 652.8,181.7 663.5,178.8 663.5,175.7 662.3,174.4" fill="#a4a4a9"/><polygon points="651.7,177.3 662.3,174.4 663.5,175.7 652.8,178.6" fill="#bdbdc1"/><polygon points="665,173.7 666.2,175 666.2,177.7 671.7,176.2 671.7,173.5 670.5,172.2" fill="#a4a4a9"/><polygon points="665,173.7 670.5,172.2 671.7,173.5 666.2,175" fill="#bdbdc1"/><polygon points="673.1,171.5 674.3,172.8 674.3,175.1 679.6,173.7 679.6,171.3 678.4,170" fill="#a4a4a9"/><polygon points="673.1,171.5 678.4,170 679.6,171.3 674.3,172.8" fill="#bdbdc1"/><polygon points="680.2,169.6 681.3,170.9 681.3,173.4 687.8,171.7 687.8,169.1 686.6,167.8" fill="#a4a4a9"/><polygon points="680.2,169.6 686.6,167.8 687.8,169.1 681.3,170.9" fill="#bdbdc1"/><polygon points="689.5,167.1 690.6,168.4 690.6,170.9 703.7,167.3 703.7,164.8 702.6,163.5" fill="#a4a4a9"/><polygon points="689.5,167.1 702.6,163.5 703.7,164.8 690.6,168.4" fill="#bdbdc1"/><polygon points="706.3,162.5 707.5,163.8 707.5,166.4 713.6,164.7 713.6,162.2 712.5,160.9" fill="#a4a4a9"/><polygon points="706.3,162.5 712.5,160.9 713.6,162.2 707.5,163.8" fill="#bdbdc1"/><polygon points="714,160.4 715.2,161.7 715.2,163.9 722.2,162.1 722.2,159.8 721,158.5" fill="#a4a4a9"/><polygon points="714,160.4 721,158.5 722.2,159.8 715.2,161.7" fill="#bdbdc1"/><polygon points="725.8,157.2 727,158.5 727,160.9 737.6,158.1 737.6,155.7 736.5,154.4" fill="#a4a4a9"/><polygon points="725.8,157.2 736.5,154.4 737.6,155.7 727,158.5" fill="#bdbdc1"/><polygon points="580.7,203.8 581.8,205.1 581.8,208.2 587.1,206.7 587.1,203.7 585.9,202.4" fill="#a4a4a9"/><polygon points="580.7,203.8 585.9,202.4 587.1,203.7 581.8,205.1" fill="#bdbdc1"/><polygon points="589.4,201.5 590.6,202.8 590.6,205.8 600.5,203.1 600.5,200.1 599.3,198.8" fill="#a4a4a9"/><polygon points="589.4,201.5 599.3,198.8 600.5,200.1 590.6,202.8" fill="#bdbdc1"/><polygon points="602.6,197.9 603.8,199.2 603.8,202.1 613.9,199.4 613.9,196.5 612.7,195.2" fill="#a4a4a9"/><polygon points="602.6,197.9 612.7,195.2 613.9,196.5 603.8,199.2" fill="#bdbdc1"/><polygon points="618.6,193.6 619.8,194.9 619.8,197.9 627.9,195.7 627.9,192.7 626.7,191.4" fill="#a4a4a9"/><polygon points="618.6,193.6 626.7,191.4 627.9,192.7 619.8,194.9" fill="#bdbdc1"/><polygon points="631.4,190.1 632.6,191.4 632.6,194 644.2,190.9 644.2,188.3 643,187" fill="#a4a4a9"/><polygon points="631.4,190.1 643,187 644.2,188.3 632.6,191.4" fill="#bdbdc1"/><polygon points="646.1,186.2 647.3,187.5 647.3,189.8 651.9,188.5 651.9,186.2 650.7,184.9" fill="#a4a4a9"/><polygon points="646.1,186.2 650.7,184.9 651.9,186.2 647.3,187.5" fill="#bdbdc1"/><polygon points="652.6,184.4 653.7,185.7 653.7,188.2 666.6,184.7 666.6,182.2 665.5,180.9" fill="#a4a4a9"/><polygon points="652.6,184.4 665.5,180.9 666.6,182.2 653.7,185.7" fill="#bdbdc1"/><polygon points="667.7,180.3 668.9,181.6 668.9,184.7 673.9,183.3 673.9,180.3 672.7,179" fill="#a4a4a9"/><polygon points="667.7,180.3 672.7,179 673.9,180.3 668.9,181.6" fill="#bdbdc1"/><polygon points="678.1,177.5 679.3,178.8 679.3,181.3 691.3,178.1 691.3,175.6 690.2,174.3" fill="#a4a4a9"/><polygon points="678.1,177.5 690.2,174.3 691.3,175.6 679.3,178.8" fill="#bdbdc1"/><polygon points="692.8,173.6 693.9,174.9 693.9,177.5 701.4,175.5 701.4,172.8 700.3,171.5" fill="#a4a4a9"/><polygon points="692.8,173.6 700.3,171.5 701.4,172.8 693.9,174.9" fill="#bdbdc1"/><polygon points="702.5,171 703.7,172.3 703.7,174.7 713,172.2 713,169.7 711.8,168.4" fill="#a4a4a9"/><polygon points="702.5,171 711.8,168.4 713,169.7 703.7,172.3" fill="#bdbdc1"/><polygon points="717.7,166.9 718.8,168.2 718.8,170.9 734.5,166.7 734.5,163.9 733.3,162.6" fill="#a4a4a9"/><polygon points="717.7,166.9 733.3,162.6 734.5,163.9 718.8,168.2" fill="#bdbdc1"/><polygon points="600.6,205.9 601.8,207.2 601.8,209.9 608.2,208.1 608.2,205.4 607,204.1" fill="#a4a4a9"/><polygon points="600.6,205.9 607,204.1 608.2,205.4 601.8,207.2" fill="#bdbdc1"/><polygon points="608.5,203.7 609.7,205 609.7,207.3 616.9,205.4 616.9,203.1 615.7,201.8" fill="#a4a4a9"/><polygon points="608.5,203.7 615.7,201.8 616.9,203.1 609.7,205" fill="#bdbdc1"/><polygon points="619,200.9 620.2,202.2 620.2,204.4 624.7,203.2 624.7,201 623.5,199.7" fill="#a4a4a9"/><polygon points="619,200.9 623.5,199.7 624.7,201 620.2,202.2" fill="#bdbdc1"/><polygon points="626.4,198.9 627.5,200.2 627.5,203 634.3,201.2 634.3,198.4 633.2,197.1" fill="#a4a4a9"/><polygon points="626.4,198.9 633.2,197.1 634.3,198.4 627.5,200.2" fill="#bdbdc1"/><polygon points="637,196 638.2,197.3 638.2,200.2 651.2,196.7 651.2,193.8 650,192.5" fill="#a4a4a9"/><polygon points="637,196 650,192.5 651.2,193.8 638.2,197.3" fill="#bdbdc1"/><polygon points="654.8,191.2 655.9,192.5 655.9,195.1 670.5,191.2 670.5,188.6 669.3,187.3" fill="#a4a4a9"/><polygon points="654.8,191.2 669.3,187.3 670.5,188.6 655.9,192.5" fill="#bdbdc1"/><polygon points="672.3,186.5 673.4,187.8 673.4,190.2 689.3,185.9 689.3,183.5 688.1,182.2" fill="#a4a4a9"/><polygon points="672.3,186.5 688.1,182.2 689.3,183.5 673.4,187.8" fill="#bdbdc1"/><polygon points="692.9,180.9 694,182.2 694,184.5 705.7,181.3 705.7,179.1 704.6,177.8" fill="#a4a4a9"/><polygon points="692.9,180.9 704.6,177.8 705.7,179.1 694,182.2" fill="#bdbdc1"/><polygon points="709.8,176.4 711,177.7 711,180.5 725.7,176.5 725.7,173.7 724.5,172.4" fill="#a4a4a9"/><polygon points="709.8,176.4 724.5,172.4 725.7,173.7 711,177.7" fill="#bdbdc1"/><polygon points="729.3,171.1 730.5,172.4 730.5,174.7 744.3,171 744.3,168.7 743.1,167.4" fill="#a4a4a9"/><polygon points="729.3,171.1 743.1,167.4 744.3,168.7 730.5,172.4" fill="#bdbdc1"/><polygon points="624,206.9 625.1,208.2 625.1,210.8 630.7,209.3 630.7,206.7 629.6,205.4" fill="#a4a4a9"/><polygon points="624,206.9 629.6,205.4 630.7,206.7 625.1,208.2" fill="#bdbdc1"/><polygon points="631.5,204.9 632.7,206.2 632.7,209 646.7,205.2 646.7,202.4 645.6,201.1" fill="#a4a4a9"/><polygon points="631.5,204.9 645.6,201.1 646.7,202.4 632.7,206.2" fill="#bdbdc1"/><polygon points="649.9,199.9 651.1,201.2 651.1,204.1 662.6,201 662.6,198.1 661.4,196.8" fill="#a4a4a9"/><polygon points="649.9,199.9 661.4,196.8 662.6,198.1 651.1,201.2" fill="#bdbdc1"/><polygon points="665.1,195.8 666.3,197.1 666.3,200.1 670.3,199 670.3,196 669.1,194.7" fill="#a4a4a9"/><polygon points="665.1,195.8 669.1,194.7 670.3,196 666.3,197.1" fill="#bdbdc1"/><polygon points="674,193.4 675.2,194.7 675.2,197.5 685.2,194.8 685.2,192 684.1,190.7" fill="#a4a4a9"/><polygon points="674,193.4 684.1,190.7 685.2,192 675.2,194.7" fill="#bdbdc1"/><polygon points="688.5,189.5 689.7,190.8 689.7,193.8 694.5,192.5 694.5,189.5 693.3,188.2" fill="#a4a4a9"/><polygon points="688.5,189.5 693.3,188.2 694.5,189.5 689.7,190.8" fill="#bdbdc1"/><polygon points="695.9,187.5 697.1,188.8 697.1,191.3 702,190 702,187.5 700.8,186.2" fill="#a4a4a9"/><polygon points="695.9,187.5 700.8,186.2 702,187.5 697.1,188.8" fill="#bdbdc1"/><polygon points="705.6,184.9 706.8,186.2 706.8,189.1 713.3,187.4 713.3,184.5 712.1,183.2" fill="#a4a4a9"/><polygon points="705.6,184.9 712.1,183.2 713.3,184.5 706.8,186.2" fill="#bdbdc1"/><polygon points="718,181.6 719.1,182.9 719.1,185.4 729.1,182.8 729.1,180.2 727.9,178.9" fill="#a4a4a9"/><polygon points="718,181.6 727.9,178.9 729.1,180.2 719.1,182.9" fill="#bdbdc1"/><polygon points="657.4,205.3 658.5,206.6 658.5,209.3 662.8,208.2 662.8,205.5 661.6,204.2" fill="#a4a4a9"/><polygon points="657.4,205.3 661.6,204.2 662.8,205.5 658.5,206.6" fill="#bdbdc1"/><polygon points="666.8,202.8 667.9,204.1 667.9,206.7 683.6,202.5 683.6,199.9 682.4,198.6" fill="#a4a4a9"/><polygon points="666.8,202.8 682.4,198.6 683.6,199.9 667.9,204.1" fill="#bdbdc1"/><polygon points="685.1,197.8 686.3,199.1 686.3,202.3 692.8,200.5 692.8,197.4 691.6,196.1" fill="#a4a4a9"/><polygon points="685.1,197.8 691.6,196.1 692.8,197.4 686.3,199.1" fill="#bdbdc1"/><polygon points="694.1,195.4 695.2,196.7 695.2,199.1 706.2,196.1 706.2,193.8 705,192.5" fill="#a4a4a9"/><polygon points="694.1,195.4 705,192.5 706.2,193.8 695.2,196.7" fill="#bdbdc1"/><polygon points="708.9,191.4 710.1,192.7 710.1,195 725.5,190.9 725.5,188.5 724.3,187.2" fill="#a4a4a9"/><polygon points="708.9,191.4 724.3,187.2 725.5,188.5 710.1,192.7" fill="#bdbdc1"/><polygon points="729.5,185.8 730.7,187.1 730.7,190.2 740.8,187.5 740.8,184.4 739.6,183.1" fill="#a4a4a9"/><polygon points="729.5,185.8 739.6,183.1 740.8,184.4 730.7,187.1" fill="#bdbdc1"/><polygon points="679,206.9 680.2,208.2 680.2,210.7 689.3,208.2 689.3,205.7 688.1,204.4" fill="#a4a4a9"/><polygon points="679,206.9 688.1,204.4 689.3,205.7 680.2,208.2" fill="#bdbdc1"/><polygon points="689.8,204 691,205.3 691,208.3 696.2,206.9 696.2,203.9 695.1,202.6" fill="#a4a4a9"/><polygon points="689.8,204 695.1,202.6 696.2,203.9 691,205.3" fill="#bdbdc1"/><polygon points="697.8,201.8 699,203.1 699,205.6 714.2,201.4 714.2,199 713.1,197.7" fill="#a4a4a9"/><polygon points="697.8,201.8 713.1,197.7 714.2,199 699,203.1" fill="#bdbdc1"/><polygon points="715.8,197 716.9,198.3 716.9,200.7 727.1,197.9 727.1,195.5 725.9,194.2" fill="#a4a4a9"/><polygon points="715.8,197 725.9,194.2 727.1,195.5 716.9,198.3" fill="#bdbdc1"/><polygon points="729.1,193.4 730.2,194.7 730.2,197.8 745.7,193.6 745.7,190.5 744.6,189.2" fill="#a4a4a9"/><polygon points="729.1,193.4 744.6,189.2 745.7,190.5 730.2,194.7" fill="#bdbdc1"/><polygon points="702.3,208 703.5,209.3 703.5,212 719.4,207.6 719.4,205 718.2,203.7" fill="#a4a4a9"/><polygon points="702.3,208 718.2,203.7 719.4,205 703.5,209.3" fill="#bdbdc1"/><polygon points="720.4,203.1 721.5,204.4 721.5,206.7 727.9,205 727.9,202.7 726.7,201.4" fill="#a4a4a9"/><polygon points="720.4,203.1 726.7,201.4 727.9,202.7 721.5,204.4" fill="#bdbdc1"/><polygon points="729.7,200.6 730.9,201.9 730.9,204.3 736,203 736,200.5 734.8,199.2" fill="#a4a4a9"/><polygon points="729.7,200.6 734.8,199.2 736,200.5 730.9,201.9" fill="#bdbdc1"/></g><g clip-path="url(#z1)"><polygon points="551.1,149.2 552.3,150.5 552.3,153.4 556.7,152.2 556.7,149.3 555.5,148" fill="#a4a4a9"/><polygon points="551.1,149.2 555.5,148 556.7,149.3 552.3,150.5" fill="#bdbdc1"/><polygon points="549.2,155.8 550.3,157.1 550.3,160.1 553.7,159.1 553.7,156.1 552.6,154.8" fill="#a4a4a9"/><polygon points="549.2,155.8 552.6,154.8 553.7,156.1 550.3,157.1" fill="#bdbdc1"/><polygon points="557.4,153.5 558.6,154.8 558.6,157.2 562.6,156.2 562.6,153.8 561.4,152.5" fill="#a4a4a9"/><polygon points="557.4,153.5 561.4,152.5 562.6,153.8 558.6,154.8" fill="#bdbdc1"/><polygon points="567.3,150.9 568.4,152.2 568.4,155.2 572.1,154.2 572.1,151.2 570.9,149.9" fill="#a4a4a9"/><polygon points="567.3,150.9 570.9,149.9 572.1,151.2 568.4,152.2" fill="#bdbdc1"/><polygon points="573.4,149.2 574.6,150.5 574.6,153.5 578,152.5 578,149.6 576.9,148.3" fill="#a4a4a9"/><polygon points="573.4,149.2 576.9,148.3 578,149.6 574.6,150.5" fill="#bdbdc1"/><polygon points="579.7,147.5 580.9,148.8 580.9,151.5 585.8,150.2 585.8,147.5 584.6,146.2" fill="#a4a4a9"/><polygon points="579.7,147.5 584.6,146.2 585.8,147.5 580.9,148.8" fill="#bdbdc1"/><polygon points="548.3,162 549.5,163.3 549.5,165.8 553.1,164.9 553.1,162.3 551.9,161" fill="#a4a4a9"/><polygon points="548.3,162 551.9,161 553.1,162.3 549.5,163.3" fill="#bdbdc1"/><polygon points="557.7,159.5 558.9,160.8 558.9,163.9 562.1,163 562.1,159.9 561,158.6" fill="#a4a4a9"/><polygon points="557.7,159.5 561,158.6 562.1,159.9 558.9,160.8" fill="#bdbdc1"/><polygon points="563.4,157.9 564.6,159.2 564.6,162.2 568.3,161.2 568.3,158.2 567.1,156.9" fill="#a4a4a9"/><polygon points="563.4,157.9 567.1,156.9 568.3,158.2 564.6,159.2" fill="#bdbdc1"/><polygon points="572.3,155.5 573.5,156.8 573.5,159.1 577.3,158 577.3,155.8 576.2,154.5" fill="#a4a4a9"/><polygon points="572.3,155.5 576.2,154.5 577.3,155.8 573.5,156.8" fill="#bdbdc1"/><polygon points="579.8,153.5 581,154.8 581,157.9 584.7,156.9 584.7,153.8 583.5,152.5" fill="#a4a4a9"/><polygon points="579.8,153.5 583.5,152.5 584.7,153.8 581,154.8" fill="#bdbdc1"/><polygon points="585.9,151.8 587.1,153.1 587.1,156.2 590.8,155.2 590.8,152.1 589.6,150.8" fill="#a4a4a9"/><polygon points="585.9,151.8 589.6,150.8 590.8,152.1 587.1,153.1" fill="#bdbdc1"/><polygon points="591.3,150.4 592.4,151.7 592.4,154.7 596.3,153.7 596.3,150.7 595.1,149.4" fill="#a4a4a9"/><polygon points="591.3,150.4 595.1,149.4 596.3,150.7 592.4,151.7" fill="#bdbdc1"/><polygon points="600,148 601.2,149.3 601.2,151.6 604.3,150.7 604.3,148.5 603.1,147.2" fill="#a4a4a9"/><polygon points="600,148 603.1,147.2 604.3,148.5 601.2,149.3" fill="#bdbdc1"/><polygon points="551.7,167.1 552.9,168.4 552.9,171.5 556.8,170.5 556.8,167.3 555.7,166" fill="#a4a4a9"/><polygon points="551.7,167.1 555.7,166 556.8,167.3 552.9,168.4" fill="#bdbdc1"/><polygon points="561.5,164.4 562.6,165.7 562.6,168.2 566.4,167.2 566.4,164.7 565.2,163.4" fill="#a4a4a9"/><polygon points="561.5,164.4 565.2,163.4 566.4,164.7 562.6,165.7" fill="#bdbdc1"/><polygon points="568.7,162.5 569.8,163.8 569.8,166.9 573.8,165.9 573.8,162.7 572.7,161.4" fill="#a4a4a9"/><polygon points="568.7,162.5 572.7,161.4 573.8,162.7 569.8,163.8" fill="#bdbdc1"/><polygon points="575,160.8 576.2,162.1 576.2,165 580.8,163.8 580.8,160.9 579.6,159.6" fill="#a4a4a9"/><polygon points="575,160.8 579.6,159.6 580.8,160.9 576.2,162.1" fill="#bdbdc1"/><polygon points="584.8,158.1 586,159.4 586,162.3 590.5,161 590.5,158.2 589.3,156.9" fill="#a4a4a9"/><polygon points="584.8,158.1 589.3,156.9 590.5,158.2 586,159.4" fill="#bdbdc1"/><polygon points="592.3,156.1 593.5,157.4 593.5,160 597.1,159 597.1,156.4 595.9,155.1" fill="#a4a4a9"/><polygon points="592.3,156.1 595.9,155.1 597.1,156.4 593.5,157.4" fill="#bdbdc1"/><polygon points="601,153.8 602.1,155.1 602.1,157.5 605.3,156.6 605.3,154.2 604.1,152.9" fill="#a4a4a9"/><polygon points="601,153.8 604.1,152.9 605.3,154.2 602.1,155.1" fill="#bdbdc1"/><polygon points="609,151.6 610.2,152.9 610.2,155.2 613.7,154.2 613.7,152 612.5,150.7" fill="#a4a4a9"/><polygon points="609,151.6 612.5,150.7 613.7,152 610.2,152.9" fill="#bdbdc1"/><polygon points="614.2,150.2 615.3,151.5 615.3,154 619.4,152.9 619.4,150.4 618.3,149.1" fill="#a4a4a9"/><polygon points="614.2,150.2 618.3,149.1 619.4,150.4 615.3,151.5" fill="#bdbdc1"/><polygon points="624.2,147.5 625.3,148.8 625.3,152 630.1,150.7 630.1,147.5 628.9,146.2" fill="#a4a4a9"/><polygon points="624.2,147.5 628.9,146.2 630.1,147.5 625.3,148.8" fill="#bdbdc1"/><polygon points="551.9,173 553.1,174.3 553.1,177.2 557.8,175.9 557.8,173.1 556.6,171.8" fill="#a4a4a9"/><polygon points="551.9,173 556.6,171.8 557.8,173.1 553.1,174.3" fill="#bdbdc1"/><polygon points="558.6,171.2 559.8,172.5 559.8,175 564.5,173.7 564.5,171.2 563.3,169.9" fill="#a4a4a9"/><polygon points="558.6,171.2 563.3,169.9 564.5,171.2 559.8,172.5" fill="#bdbdc1"/><polygon points="567.4,168.9 568.5,170.2 568.5,173.1 572.3,172.1 572.3,169.1 571.1,167.8" fill="#a4a4a9"/><polygon points="567.4,168.9 571.1,167.8 572.3,169.1 568.5,170.2" fill="#bdbdc1"/><polygon points="573.5,167.2 574.7,168.5 574.7,170.9 578.2,170 578.2,167.5 577,166.2" fill="#a4a4a9"/><polygon points="573.5,167.2 577,166.2 578.2,167.5 574.7,168.5" fill="#bdbdc1"/><polygon points="579.2,165.7 580.4,167 580.4,169.7 585.1,168.4 585.1,165.7 584,164.4" fill="#a4a4a9"/><polygon points="579.2,165.7 584,164.4 585.1,165.7 580.4,167" fill="#bdbdc1"/><polygon points="586.9,163.6 588.1,164.9 588.1,168.1 591.9,167 591.9,163.8 590.7,162.5" fill="#a4a4a9"/><polygon points="586.9,163.6 590.7,162.5 591.9,163.8 588.1,164.9" fill="#bdbdc1"/><polygon points="594.5,161.5 595.7,162.8 595.7,165.8 599.1,164.9 599.1,161.9 598,160.6" fill="#a4a4a9"/><polygon points="594.5,161.5 598,160.6 599.1,161.9 595.7,162.8" fill="#bdbdc1"/><polygon points="602.4,159.4 603.6,160.7 603.6,163 608.6,161.6 608.6,159.3 607.4,158" fill="#a4a4a9"/><polygon points="602.4,159.4 607.4,158 608.6,159.3 603.6,160.7" fill="#bdbdc1"/><polygon points="611,157.1 612.2,158.4 612.2,161.4 616.8,160.2 616.8,157.1 615.7,155.8" fill="#a4a4a9"/><polygon points="611,157.1 615.7,155.8 616.8,157.1 612.2,158.4" fill="#bdbdc1"/><polygon points="621.3,154.3 622.4,155.6 622.4,158.1 625.5,157.3 625.5,154.8 624.4,153.5" fill="#a4a4a9"/><polygon points="621.3,154.3 624.4,153.5 625.5,154.8 622.4,155.6" fill="#bdbdc1"/><polygon points="626.4,152.9 627.6,154.2 627.6,157.4 630.9,156.5 630.9,153.3 629.8,152" fill="#a4a4a9"/><polygon points="626.4,152.9 629.8,152 630.9,153.3 627.6,154.2" fill="#bdbdc1"/><polygon points="633.9,150.9 635.1,152.2 635.1,154.8 639.9,153.4 639.9,150.9 638.8,149.6" fill="#a4a4a9"/><polygon points="633.9,150.9 638.8,149.6 639.9,150.9 635.1,152.2" fill="#bdbdc1"/><polygon points="552.1,179 553.2,180.3 553.2,183.1 556.4,182.2 556.4,179.4 555.3,178.1" fill="#a4a4a9"/><polygon points="552.1,179 555.3,178.1 556.4,179.4 553.2,180.3" fill="#bdbdc1"/><polygon points="559.6,177 560.7,178.3 560.7,180.8 564.2,179.9 564.2,177.3 563,176" fill="#a4a4a9"/><polygon points="559.6,177 563,176 564.2,177.3 560.7,178.3" fill="#bdbdc1"/><polygon points="565.1,175.5 566.3,176.8 566.3,179.2 569.7,178.3 569.7,175.8 568.5,174.5" fill="#a4a4a9"/><polygon points="565.1,175.5 568.5,174.5 569.7,175.8 566.3,176.8" fill="#bdbdc1"/><polygon points="572.7,173.4 573.9,174.7 573.9,177.1 578.2,175.9 578.2,173.5 577,172.2" fill="#a4a4a9"/><polygon points="572.7,173.4 577,172.2 578.2,173.5 573.9,174.7" fill="#bdbdc1"/><polygon points="578.6,171.8 579.8,173.1 579.8,176 583.4,175 583.4,172.1 582.3,170.8" fill="#a4a4a9"/><polygon points="578.6,171.8 582.3,170.8 583.4,172.1 579.8,173.1" fill="#bdbdc1"/><polygon points="584.6,170.2 585.8,171.5 585.8,173.9 589.4,172.9 589.4,170.5 588.2,169.2" fill="#a4a4a9"/><polygon points="584.6,170.2 588.2,169.2 589.4,170.5 585.8,171.5" fill="#bdbdc1"/><polygon points="593.3,167.9 594.5,169.2 594.5,171.4 598.6,170.3 598.6,168 597.4,166.7" fill="#a4a4a9"/><polygon points="593.3,167.9 597.4,166.7 598.6,168 594.5,169.2" fill="#bdbdc1"/><polygon points="599.3,166.2 600.5,167.5 600.5,170.3 604.3,169.2 604.3,166.5 603.1,165.2" fill="#a4a4a9"/><polygon points="599.3,166.2 603.1,165.2 604.3,166.5 600.5,167.5" fill="#bdbdc1"/><polygon points="607.5,164 608.7,165.3 608.7,167.7 611.9,166.8 611.9,164.5 610.7,163.2" fill="#a4a4a9"/><polygon points="607.5,164 610.7,163.2 611.9,164.5 608.7,165.3" fill="#bdbdc1"/><polygon points="615.3,161.9 616.5,163.2 616.5,165.7 620.3,164.7 620.3,162.2 619.1,160.9" fill="#a4a4a9"/><polygon points="615.3,161.9 619.1,160.9 620.3,162.2 616.5,163.2" fill="#bdbdc1"/><polygon points="622,160.1 623.2,161.4 623.2,163.9 628.1,162.6 628.1,160.1 626.9,158.8" fill="#a4a4a9"/><polygon points="622,160.1 626.9,158.8 628.1,160.1 623.2,161.4" fill="#bdbdc1"/><polygon points="631,157.7 632.1,159 632.1,161.6 635.9,160.6 635.9,158 634.7,156.7" fill="#a4a4a9"/><polygon points="631,157.7 634.7,156.7 635.9,158 632.1,159" fill="#bdbdc1"/><polygon points="554.2,184.4 555.4,185.7 555.4,187.9 558.8,187 558.8,184.8 557.6,183.5" fill="#a4a4a9"/><polygon points="554.2,184.4 557.6,183.5 558.8,184.8 555.4,185.7" fill="#bdbdc1"/><polygon points="563.2,182 564.3,183.3 564.3,186.3 568.2,185.3 568.2,182.2 567,180.9" fill="#a4a4a9"/><polygon points="563.2,182 567,180.9 568.2,182.2 564.3,183.3" fill="#bdbdc1"/><polygon points="570.3,180 571.5,181.3 571.5,184 576.3,182.7 576.3,180.1 575.1,178.8" fill="#a4a4a9"/><polygon points="570.3,180 575.1,178.8 576.3,180.1 571.5,181.3" fill="#bdbdc1"/><polygon points="577.3,178.2 578.5,179.5 578.5,182.2 581.5,181.4 581.5,178.6 580.4,177.3" fill="#a4a4a9"/><polygon points="577.3,178.2 580.4,177.3 581.5,178.6 578.5,179.5" fill="#bdbdc1"/><polygon points="584.8,176.2 585.9,177.5 585.9,179.7 590.7,178.4 590.7,176.2 589.6,174.9" fill="#a4a4a9"/><polygon points="584.8,176.2 589.6,174.9 590.7,176.2 585.9,177.5" fill="#bdbdc1"/><polygon points="593.9,173.7 595,175 595,177.7 598.8,176.7 598.8,174 597.6,172.7" fill="#a4a4a9"/><polygon points="593.9,173.7 597.6,172.7 598.8,174 595,175" fill="#bdbdc1"/><polygon points="599.8,172.1 600.9,173.4 600.9,176.1 604.5,175.2 604.5,172.4 603.3,171.1" fill="#a4a4a9"/><polygon points="599.8,172.1 603.3,171.1 604.5,172.4 600.9,173.4" fill="#bdbdc1"/><polygon points="609,169.6 610.2,170.9 610.2,173.6 613.4,172.7 613.4,170 612.2,168.7" fill="#a4a4a9"/><polygon points="609,169.6 612.2,168.7 613.4,170 610.2,170.9" fill="#bdbdc1"/><polygon points="617.3,167.4 618.5,168.7 618.5,171.1 623.4,169.7 623.4,167.3 622.3,166" fill="#a4a4a9"/><polygon points="617.3,167.4 622.3,166 623.4,167.3 618.5,168.7" fill="#bdbdc1"/><polygon points="624.3,165.5 625.5,166.8 625.5,169.9 630.4,168.6 630.4,165.4 629.2,164.1" fill="#a4a4a9"/><polygon points="624.3,165.5 629.2,164.1 630.4,165.4 625.5,166.8" fill="#bdbdc1"/><polygon points="632.9,163.2 634.1,164.5 634.1,167.6 637.2,166.7 637.2,163.6 636,162.3" fill="#a4a4a9"/><polygon points="632.9,163.2 636,162.3 637.2,163.6 634.1,164.5" fill="#bdbdc1"/><polygon points="552.2,191 553.3,192.3 553.3,194.7 557.9,193.4 557.9,191 556.7,189.7" fill="#a4a4a9"/><polygon points="552.2,191 556.7,189.7 557.9,191 553.3,192.3" fill="#bdbdc1"/><polygon points="560,188.8 561.2,190.1 561.2,193.2 565.9,191.9 565.9,188.9 564.7,187.6" fill="#a4a4a9"/><polygon points="560,188.8 564.7,187.6 565.9,188.9 561.2,190.1" fill="#bdbdc1"/><polygon points="567.1,186.9 568.2,188.2 568.2,190.8 571.7,189.9 571.7,187.3 570.5,186" fill="#a4a4a9"/><polygon points="567.1,186.9 570.5,186 571.7,187.3 568.2,188.2" fill="#bdbdc1"/><polygon points="574.3,185 575.5,186.3 575.5,188.6 579.3,187.6 579.3,185.3 578.1,184" fill="#a4a4a9"/><polygon points="574.3,185 578.1,184 579.3,185.3 575.5,186.3" fill="#bdbdc1"/><polygon points="580.7,183.2 581.9,184.5 581.9,187.6 586.3,186.4 586.3,183.3 585.2,182" fill="#a4a4a9"/><polygon points="580.7,183.2 585.2,182 586.3,183.3 581.9,184.5" fill="#bdbdc1"/><polygon points="586.8,181.6 588,182.9 588,185.8 592.1,184.7 592.1,181.8 591,180.5" fill="#a4a4a9"/><polygon points="586.8,181.6 591,180.5 592.1,181.8 588,182.9" fill="#bdbdc1"/><polygon points="592.6,180 593.8,181.3 593.8,183.6 598.5,182.4 598.5,180.1 597.3,178.8" fill="#a4a4a9"/><polygon points="592.6,180 597.3,178.8 598.5,180.1 593.8,181.3" fill="#bdbdc1"/><polygon points="601.5,177.6 602.7,178.9 602.7,181.8 606.8,180.7 606.8,177.8 605.6,176.5" fill="#a4a4a9"/><polygon points="601.5,177.6 605.6,176.5 606.8,177.8 602.7,178.9" fill="#bdbdc1"/><polygon points="608.5,175.7 609.7,177 609.7,179.8 613.5,178.8 613.5,176 612.3,174.7" fill="#a4a4a9"/><polygon points="608.5,175.7 612.3,174.7 613.5,176 609.7,177" fill="#bdbdc1"/><polygon points="615.7,173.8 616.9,175.1 616.9,177.7 621.2,176.6 621.2,173.9 620.1,172.6" fill="#a4a4a9"/><polygon points="615.7,173.8 620.1,172.6 621.2,173.9 616.9,175.1" fill="#bdbdc1"/><polygon points="623.5,171.7 624.7,173 624.7,175.8 627.8,175 627.8,172.2 626.6,170.9" fill="#a4a4a9"/><polygon points="623.5,171.7 626.6,170.9 627.8,172.2 624.7,173" fill="#bdbdc1"/><polygon points="630.3,169.9 631.5,171.2 631.5,174.1 634.9,173.2 634.9,170.2 633.8,168.9" fill="#a4a4a9"/><polygon points="630.3,169.9 633.8,168.9 634.9,170.2 631.5,171.2" fill="#bdbdc1"/><polygon points="548.8,197.9 550,199.2 550,201.8 553.3,200.9 553.3,198.3 552.1,197" fill="#a4a4a9"/><polygon points="548.8,197.9 552.1,197 553.3,198.3 550,199.2" fill="#bdbdc1"/><polygon points="554,196.5 555.2,197.8 555.2,200.5 559.1,199.4 559.1,196.7 557.9,195.4" fill="#a4a4a9"/><polygon points="554,196.5 557.9,195.4 559.1,196.7 555.2,197.8" fill="#bdbdc1"/><polygon points="559.6,195 560.8,196.3 560.8,198.5 565,197.4 565,195.1 563.9,193.8" fill="#a4a4a9"/><polygon points="559.6,195 563.9,193.8 565,195.1 560.8,196.3" fill="#bdbdc1"/><polygon points="568.7,192.5 569.8,193.8 569.8,196.5 574.4,195.3 574.4,192.6 573.2,191.3" fill="#a4a4a9"/><polygon points="568.7,192.5 573.2,191.3 574.4,192.6 569.8,193.8" fill="#bdbdc1"/><polygon points="575,190.8 576.1,192.1 576.1,194.7 580.1,193.6 580.1,191 579,189.7" fill="#a4a4a9"/><polygon points="575,190.8 579,189.7 580.1,191 576.1,192.1" fill="#bdbdc1"/><polygon points="584.7,188.2 585.9,189.5 585.9,192.5 589.2,191.6 589.2,188.6 588,187.3" fill="#a4a4a9"/><polygon points="584.7,188.2 588,187.3 589.2,188.6 585.9,189.5" fill="#bdbdc1"/><polygon points="594,185.7 595.2,187 595.2,190 599.6,188.8 599.6,185.8 598.5,184.5" fill="#a4a4a9"/><polygon points="594,185.7 598.5,184.5 599.6,185.8 595.2,187" fill="#bdbdc1"/><polygon points="600.8,183.8 602,185.1 602,187.8 607,186.5 607,183.8 605.8,182.5" fill="#a4a4a9"/><polygon points="600.8,183.8 605.8,182.5 607,183.8 602,185.1" fill="#bdbdc1"/><polygon points="611.6,180.9 612.8,182.2 612.8,184.6 617.6,183.3 617.6,180.9 616.4,179.6" fill="#a4a4a9"/><polygon points="611.6,180.9 616.4,179.6 617.6,180.9 612.8,182.2" fill="#bdbdc1"/><polygon points="621.5,178.2 622.7,179.5 622.7,181.8 627.5,180.5 627.5,178.2 626.3,176.9" fill="#a4a4a9"/><polygon points="621.5,178.2 626.3,176.9 627.5,178.2 622.7,179.5" fill="#bdbdc1"/><polygon points="629.4,176.1 630.6,177.4 630.6,179.8 635.1,178.5 635.1,176.2 633.9,174.9" fill="#a4a4a9"/><polygon points="629.4,176.1 633.9,174.9 635.1,176.2 630.6,177.4" fill="#bdbdc1"/><polygon points="550.7,203.4 551.8,204.7 551.8,207.1 556.7,205.8 556.7,203.4 555.5,202.1" fill="#a4a4a9"/><polygon points="550.7,203.4 555.5,202.1 556.7,203.4 551.8,204.7" fill="#bdbdc1"/><polygon points="558.2,201.3 559.4,202.6 559.4,205.1 563.4,204.1 563.4,201.5 562.2,200.2" fill="#a4a4a9"/><polygon points="558.2,201.3 562.2,200.2 563.4,201.5 559.4,202.6" fill="#bdbdc1"/><polygon points="563.9,199.8 565,201.1 565,203.5 568.4,202.5 568.4,200.2 567.2,198.9" fill="#a4a4a9"/><polygon points="563.9,199.8 567.2,198.9 568.4,200.2 565,201.1" fill="#bdbdc1"/><polygon points="572.9,197.3 574.1,198.6 574.1,201.7 578.5,200.6 578.5,197.5 577.3,196.2" fill="#a4a4a9"/><polygon points="572.9,197.3 577.3,196.2 578.5,197.5 574.1,198.6" fill="#bdbdc1"/><polygon points="579.6,195.6 580.7,196.9 580.7,199.2 585.3,197.9 585.3,195.6 584.1,194.3" fill="#a4a4a9"/><polygon points="579.6,195.6 584.1,194.3 585.3,195.6 580.7,196.9" fill="#bdbdc1"/><polygon points="588,193.3 589.2,194.6 589.2,197.1 593.5,196 593.5,193.4 592.3,192.1" fill="#a4a4a9"/><polygon points="588,193.3 592.3,192.1 593.5,193.4 589.2,194.6" fill="#bdbdc1"/><polygon points="597.7,190.7 598.9,192 598.9,194.7 603,193.6 603,190.8 601.8,189.5" fill="#a4a4a9"/><polygon points="597.7,190.7 601.8,189.5 603,190.8 598.9,192" fill="#bdbdc1"/><polygon points="607.3,188.1 608.5,189.4 608.5,192.6 611.7,191.7 611.7,188.5 610.5,187.2" fill="#a4a4a9"/><polygon points="607.3,188.1 610.5,187.2 611.7,188.5 608.5,189.4" fill="#bdbdc1"/><polygon points="614.8,186 616,187.3 616,190.3 619.8,189.3 619.8,186.3 618.6,185" fill="#a4a4a9"/><polygon points="614.8,186 618.6,185 619.8,186.3 616,187.3" fill="#bdbdc1"/><polygon points="621.3,184.3 622.5,185.6 622.5,188.4 627.5,187 627.5,184.2 626.3,182.9" fill="#a4a4a9"/><polygon points="621.3,184.3 626.3,182.9 627.5,184.2 622.5,185.6" fill="#bdbdc1"/><polygon points="629.4,182.1 630.6,183.4 630.6,186 635.1,184.8 635.1,182.2 634,180.9" fill="#a4a4a9"/><polygon points="629.4,182.1 634,180.9 635.1,182.2 630.6,183.4" fill="#bdbdc1"/><polygon points="555.6,208 556.8,209.3 556.8,211.7 559.9,210.8 559.9,208.5 558.7,207.2" fill="#a4a4a9"/><polygon points="555.6,208 558.7,207.2 559.9,208.5 556.8,209.3" fill="#bdbdc1"/><polygon points="563,206 564.2,207.3 564.2,210 568,209 568,206.3 566.9,205" fill="#a4a4a9"/><polygon points="563,206 566.9,205 568,206.3 564.2,207.3" fill="#bdbdc1"/><polygon points="572.4,203.5 573.6,204.8 573.6,207.2 576.8,206.3 576.8,203.9 575.6,202.6" fill="#a4a4a9"/><polygon points="572.4,203.5 575.6,202.6 576.8,203.9 573.6,204.8" fill="#bdbdc1"/><polygon points="580.1,201.4 581.3,202.7 581.3,204.9 584.3,204.1 584.3,201.9 583.1,200.6" fill="#a4a4a9"/><polygon points="580.1,201.4 583.1,200.6 584.3,201.9 581.3,202.7" fill="#bdbdc1"/><polygon points="586.2,199.8 587.4,201.1 587.4,203.6 590.6,202.7 590.6,200.2 589.4,198.9" fill="#a4a4a9"/><polygon points="586.2,199.8 589.4,198.9 590.6,200.2 587.4,201.1" fill="#bdbdc1"/><polygon points="591.9,198.2 593.1,199.5 593.1,202.3 597.3,201.2 597.3,198.4 596.1,197.1" fill="#a4a4a9"/><polygon points="591.9,198.2 596.1,197.1 597.3,198.4 593.1,199.5" fill="#bdbdc1"/><polygon points="598.5,196.4 599.7,197.7 599.7,200.4 604,199.3 604,196.6 602.8,195.3" fill="#a4a4a9"/><polygon points="598.5,196.4 602.8,195.3 604,196.6 599.7,197.7" fill="#bdbdc1"/><polygon points="604.9,194.7 606.1,196 606.1,198.5 610.9,197.1 610.9,194.7 609.8,193.4" fill="#a4a4a9"/><polygon points="604.9,194.7 609.8,193.4 610.9,194.7 606.1,196" fill="#bdbdc1"/><polygon points="611.9,192.8 613.1,194.1 613.1,197 616.3,196.1 616.3,193.3 615.1,192" fill="#a4a4a9"/><polygon points="611.9,192.8 615.1,192 616.3,193.3 613.1,194.1" fill="#bdbdc1"/><polygon points="620.5,190.5 621.7,191.8 621.7,194.4 626.3,193.2 626.3,190.6 625.1,189.3" fill="#a4a4a9"/><polygon points="620.5,190.5 625.1,189.3 626.3,190.6 621.7,191.8" fill="#bdbdc1"/><polygon points="627.8,188.5 629,189.8 629,192.7 632,191.9 632,189 630.8,187.7" fill="#a4a4a9"/><polygon points="627.8,188.5 630.8,187.7 632,189 629,189.8" fill="#bdbdc1"/><polygon points="575.1,208.7 576.3,210 576.3,212.4 579.6,211.6 579.6,209.2 578.4,207.9" fill="#a4a4a9"/><polygon points="575.1,208.7 578.4,207.9 579.6,209.2 576.3,210" fill="#bdbdc1"/><polygon points="582.7,206.7 583.8,208 583.8,210.9 587.9,209.8 587.9,206.9 586.7,205.6" fill="#a4a4a9"/><polygon points="582.7,206.7 586.7,205.6 587.9,206.9 583.8,208" fill="#bdbdc1"/><polygon points="591.8,204.2 593,205.5 593,208.1 596.4,207.1 596.4,204.6 595.2,203.3" fill="#a4a4a9"/><polygon points="591.8,204.2 595.2,203.3 596.4,204.6 593,205.5" fill="#bdbdc1"/><polygon points="598,202.6 599.2,203.9 599.2,207 602.3,206.1 602.3,203 601.1,201.7" fill="#a4a4a9"/><polygon points="598,202.6 601.1,201.7 602.3,203 599.2,203.9" fill="#bdbdc1"/><polygon points="606.2,200.4 607.3,201.7 607.3,203.9 611.8,202.7 611.8,200.5 610.6,199.2" fill="#a4a4a9"/><polygon points="606.2,200.4 610.6,199.2 611.8,200.5 607.3,201.7" fill="#bdbdc1"/><polygon points="615.9,197.7 617.1,199 617.1,201.7 621.6,200.5 621.6,197.8 620.4,196.5" fill="#a4a4a9"/><polygon points="615.9,197.7 620.4,196.5 621.6,197.8 617.1,199" fill="#bdbdc1"/><polygon points="625.2,195.2 626.4,196.5 626.4,199 630.3,197.9 630.3,195.5 629.1,194.2" fill="#a4a4a9"/><polygon points="625.2,195.2 629.1,194.2 630.3,195.5 626.4,196.5" fill="#bdbdc1"/><polygon points="631.1,193.6 632.3,194.9 632.3,197.2 635.7,196.2 635.7,194 634.6,192.7" fill="#a4a4a9"/><polygon points="631.1,193.6 634.6,192.7 635.7,194 632.3,194.9" fill="#bdbdc1"/><polygon points="601.9,207.5 603.1,208.8 603.1,211.5 608.1,210.2 608.1,207.5 606.9,206.2" fill="#a4a4a9"/><polygon points="601.9,207.5 606.9,206.2 608.1,207.5 603.1,208.8" fill="#bdbdc1"/><polygon points="612.2,204.8 613.3,206.1 613.3,209.1 617.7,207.9 617.7,204.9 616.6,203.6" fill="#a4a4a9"/><polygon points="612.2,204.8 616.6,203.6 617.7,204.9 613.3,206.1" fill="#bdbdc1"/><polygon points="620,202.6 621.2,203.9 621.2,206.7 625.6,205.5 625.6,202.7 624.5,201.4" fill="#a4a4a9"/><polygon points="620,202.6 624.5,201.4 625.6,202.7 621.2,203.9" fill="#bdbdc1"/><polygon points="627.4,200.7 628.5,202 628.5,204.8 632,203.9 632,201 630.8,199.7" fill="#a4a4a9"/><polygon points="627.4,200.7 630.8,199.7 632,201 628.5,202" fill="#bdbdc1"/><polygon points="632.6,199.2 633.8,200.5 633.8,202.9 638.6,201.6 638.6,199.2 637.5,197.9" fill="#a4a4a9"/><polygon points="632.6,199.2 637.5,197.9 638.6,199.2 633.8,200.5" fill="#bdbdc1"/><polygon points="621,208.4 622.2,209.7 622.2,212.1 625.7,211.2 625.7,208.7 624.6,207.4" fill="#a4a4a9"/><polygon points="621,208.4 624.6,207.4 625.7,208.7 622.2,209.7" fill="#bdbdc1"/><polygon points="629.3,206.1 630.4,207.4 630.4,210 634.2,208.9 634.2,206.4 633,205.1" fill="#a4a4a9"/><polygon points="629.3,206.1 633,205.1 634.2,206.4 630.4,207.4" fill="#bdbdc1"/></g><g clip-path="url(#z2)"><polygon points="552.5,130.4 553.7,131.7 553.7,134.5 567.9,130.7 567.9,127.9 566.7,126.6" fill="#a4a4a9"/><polygon points="552.5,130.4 566.7,126.6 567.9,127.9 553.7,131.7" fill="#bdbdc1"/><polygon points="551.1,138.2 552.3,139.5 552.3,141.8 566.6,137.9 566.6,135.6 565.4,134.3" fill="#a4a4a9"/><polygon points="551.1,138.2 565.4,134.3 566.6,135.6 552.3,139.5" fill="#bdbdc1"/><polygon points="570.6,132.9 571.8,134.2 571.8,136.4 577.8,134.8 577.8,132.6 576.7,131.3" fill="#a4a4a9"/><polygon points="570.6,132.9 576.7,131.3 577.8,132.6 571.8,134.2" fill="#bdbdc1"/><polygon points="579.1,130.7 580.2,132 580.2,135.1 593.4,131.6 593.4,128.4 592.2,127.1" fill="#a4a4a9"/><polygon points="579.1,130.7 592.2,127.1 593.4,128.4 580.2,132" fill="#bdbdc1"/><polygon points="563.8,142.2 565,143.5 565,146 574.9,143.3 574.9,140.8 573.8,139.5" fill="#a4a4a9"/><polygon points="563.8,142.2 573.8,139.5 574.9,140.8 565,143.5" fill="#bdbdc1"/><polygon points="579,138.1 580.2,139.4 580.2,142.5 587.3,140.6 587.3,137.4 586.1,136.1" fill="#a4a4a9"/><polygon points="579,138.1 586.1,136.1 587.3,137.4 580.2,139.4" fill="#bdbdc1"/></g><g clip-path="url(#z3)"><polygon points="605.1,130.8 606.2,132.1 606.2,134.8 618.6,131.5 618.6,128.8 617.5,127.5" fill="#a4a4a9"/><polygon points="605.1,130.8 617.5,127.5 618.6,128.8 606.2,132.1" fill="#bdbdc1"/><polygon points="619.5,126.9 620.6,128.2 620.6,130.5 632.3,127.4 632.3,125.1 631.1,123.8" fill="#a4a4a9"/><polygon points="619.5,126.9 631.1,123.8 632.3,125.1 620.6,128.2" fill="#bdbdc1"/><polygon points="607.2,137.6 608.4,138.9 608.4,141.5 616.6,139.2 616.6,136.7 615.4,135.4" fill="#a4a4a9"/><polygon points="607.2,137.6 615.4,135.4 616.6,136.7 608.4,138.9" fill="#bdbdc1"/><polygon points="617.6,134.8 618.8,136.1 618.8,139 632.9,135.2 632.9,132.3 631.7,131" fill="#a4a4a9"/><polygon points="617.6,134.8 631.7,131 632.9,132.3 618.8,136.1" fill="#bdbdc1"/><polygon points="636.6,129.7 637.7,131 637.7,133.6 643.8,132 643.8,129.4 642.6,128.1" fill="#a4a4a9"/><polygon points="636.6,129.7 642.6,128.1 643.8,129.4 637.7,131" fill="#bdbdc1"/><polygon points="631.2,138.6 632.4,139.9 632.4,142.2 644,139 644,136.7 642.8,135.4" fill="#a4a4a9"/><polygon points="631.2,138.6 642.8,135.4 644,136.7 632.4,139.9" fill="#bdbdc1"/><polygon points="645.3,134.8 646.4,136.1 646.4,138.3 655.1,136 655.1,133.7 653.9,132.4" fill="#a4a4a9"/><polygon points="645.3,134.8 653.9,132.4 655.1,133.7 646.4,136.1" fill="#bdbdc1"/><polygon points="657.2,131.5 658.4,132.8 658.4,135.7 671.9,132.1 671.9,129.2 670.7,127.9" fill="#a4a4a9"/><polygon points="657.2,131.5 670.7,127.9 671.9,129.2 658.4,132.8" fill="#bdbdc1"/><polygon points="674.5,126.9 675.6,128.2 675.6,130.8 687.2,127.7 687.2,125 686.1,123.7" fill="#a4a4a9"/><polygon points="674.5,126.9 686.1,123.7 687.2,125 675.6,128.2" fill="#bdbdc1"/><polygon points="664.4,137 665.6,138.3 665.6,141.1 678.1,137.7 678.1,134.9 677,133.6" fill="#a4a4a9"/><polygon points="664.4,137 677,133.6 678.1,134.9 665.6,138.3" fill="#bdbdc1"/><polygon points="679.6,132.9 680.8,134.2 680.8,136.8 689.8,134.4 689.8,131.7 688.7,130.4" fill="#a4a4a9"/><polygon points="679.6,132.9 688.7,130.4 689.8,131.7 680.8,134.2" fill="#bdbdc1"/><polygon points="693,129.3 694.1,130.6 694.1,133.5 703.1,131 703.1,128.2 701.9,126.9" fill="#a4a4a9"/><polygon points="693,129.3 701.9,126.9 703.1,128.2 694.1,130.6" fill="#bdbdc1"/><polygon points="693.7,136.5 694.8,137.8 694.8,140 703.1,137.8 703.1,135.6 701.9,134.3" fill="#a4a4a9"/><polygon points="693.7,136.5 701.9,134.3 703.1,135.6 694.8,137.8" fill="#bdbdc1"/><polygon points="704.7,133.5 705.8,134.8 705.8,137 714.6,134.7 714.6,132.4 713.5,131.1" fill="#a4a4a9"/><polygon points="704.7,133.5 713.5,131.1 714.6,132.4 705.8,134.8" fill="#bdbdc1"/><polygon points="716.8,130.2 718,131.5 718,134.4 727.1,132 727.1,129.1 725.9,127.8" fill="#a4a4a9"/><polygon points="716.8,130.2 725.9,127.8 727.1,129.1 718,131.5" fill="#bdbdc1"/><polygon points="729,127 730.1,128.3 730.1,130.7 737.3,128.7 737.3,126.3 736.2,125" fill="#a4a4a9"/><polygon points="729,127 736.2,125 737.3,126.3 730.1,128.3" fill="#bdbdc1"/><polygon points="722.3,136.1 723.5,137.4 723.5,140 730.7,138.1 730.7,135.5 729.5,134.2" fill="#a4a4a9"/><polygon points="722.3,136.1 729.5,134.2 730.7,135.5 723.5,137.4" fill="#bdbdc1"/></g><g clip-path="url(#z4)"><polygon points="672.6,194.7 673.8,196 673.8,198.5 681.2,196.5 681.2,194 680,192.7" fill="#a4a4a9"/><polygon points="672.6,194.7 680,192.7 681.2,194 673.8,196" fill="#bdbdc1"/><polygon points="682.8,192 684,193.3 684,195.9 693.8,193.3 693.8,190.6 692.6,189.3" fill="#a4a4a9"/><polygon points="682.8,192 692.6,189.3 693.8,190.6 684,193.3" fill="#bdbdc1"/><polygon points="673.2,202 674.3,203.3 674.3,205.5 685.9,202.4 685.9,200.1 684.8,198.8" fill="#a4a4a9"/><polygon points="673.2,202 684.8,198.8 685.9,200.1 674.3,203.3" fill="#bdbdc1"/><polygon points="686.3,198.4 687.5,199.7 687.5,202.6 702.9,198.4 702.9,195.6 701.7,194.3" fill="#a4a4a9"/><polygon points="686.3,198.4 701.7,194.3 702.9,195.6 687.5,199.7" fill="#bdbdc1"/><polygon points="704.4,193.6 705.5,194.9 705.5,197.2 710.7,195.8 710.7,193.4 709.6,192.1" fill="#a4a4a9"/><polygon points="704.4,193.6 709.6,192.1 710.7,193.4 705.5,194.9" fill="#bdbdc1"/><polygon points="712.1,191.5 713.3,192.8 713.3,195.3 726.6,191.7 726.6,189.2 725.4,187.9" fill="#a4a4a9"/><polygon points="712.1,191.5 725.4,187.9 726.6,189.2 713.3,192.8" fill="#bdbdc1"/><polygon points="673.5,209.3 674.6,210.6 674.6,213.6 685.9,210.5 685.9,207.5 684.8,206.2" fill="#a4a4a9"/><polygon points="673.5,209.3 684.8,206.2 685.9,207.5 674.6,210.6" fill="#bdbdc1"/><polygon points="689.3,205 690.4,206.3 690.4,209.3 705.2,205.3 705.2,202.4 704,201.1" fill="#a4a4a9"/><polygon points="689.3,205 704,201.1 705.2,202.4 690.4,206.3" fill="#bdbdc1"/><polygon points="709.3,199.6 710.4,200.9 710.4,203.8 716.8,202.1 716.8,199.2 715.6,197.9" fill="#a4a4a9"/><polygon points="709.3,199.6 715.6,197.9 716.8,199.2 710.4,200.9" fill="#bdbdc1"/><polygon points="719.5,196.9 720.7,198.2 720.7,200.8 733.6,197.3 733.6,194.7 732.4,193.4" fill="#a4a4a9"/><polygon points="719.5,196.9 732.4,193.4 733.6,194.7 720.7,198.2" fill="#bdbdc1"/><polygon points="671.8,217.2 672.9,218.5 672.9,220.9 680.1,218.9 680.1,216.5 678.9,215.2" fill="#a4a4a9"/><polygon points="671.8,217.2 678.9,215.2 680.1,216.5 672.9,218.5" fill="#bdbdc1"/><polygon points="681.1,214.6 682.2,215.9 682.2,218.2 692.2,215.5 692.2,213.3 691,212" fill="#a4a4a9"/><polygon points="681.1,214.6 691,212 692.2,213.3 682.2,215.9" fill="#bdbdc1"/><polygon points="694.6,211 695.8,212.3 695.8,215 701.5,213.4 701.5,210.7 700.3,209.4" fill="#a4a4a9"/><polygon points="694.6,211 700.3,209.4 701.5,210.7 695.8,212.3" fill="#bdbdc1"/><polygon points="704.1,208.4 705.2,209.7 705.2,212.8 715.7,210 715.7,206.9 714.5,205.6" fill="#a4a4a9"/><polygon points="704.1,208.4 714.5,205.6 715.7,206.9 705.2,209.7" fill="#bdbdc1"/><polygon points="716.1,205.2 717.2,206.5 717.2,209.2 731.3,205.4 731.3,202.7 730.2,201.4" fill="#a4a4a9"/><polygon points="716.1,205.2 730.2,201.4 731.3,202.7 717.2,206.5" fill="#bdbdc1"/><polygon points="671.1,224.7 672.3,226 672.3,228.3 687.8,224.1 687.8,221.8 686.6,220.5" fill="#a4a4a9"/><polygon points="671.1,224.7 686.6,220.5 687.8,221.8 672.3,226" fill="#bdbdc1"/><polygon points="691,219.4 692.2,220.7 692.2,222.9 703.8,219.8 703.8,217.5 702.6,216.2" fill="#a4a4a9"/><polygon points="691,219.4 702.6,216.2 703.8,217.5 692.2,220.7" fill="#bdbdc1"/><polygon points="706.9,215.1 708,216.4 708,219.5 720.2,216.2 720.2,213.1 719.1,211.8" fill="#a4a4a9"/><polygon points="706.9,215.1 719.1,211.8 720.2,213.1 708,216.4" fill="#bdbdc1"/><polygon points="722,211 723.2,212.3 723.2,215 739,210.7 739,208 737.8,206.7" fill="#a4a4a9"/><polygon points="722,211 737.8,206.7 739,208 723.2,212.3" fill="#bdbdc1"/><polygon points="713.5,220.7 714.6,222 714.6,225 725.3,222.1 725.3,219.1 724.1,217.8" fill="#a4a4a9"/><polygon points="713.5,220.7 724.1,217.8 725.3,219.1 714.6,222" fill="#bdbdc1"/><polygon points="726.9,217.1 728.1,218.4 728.1,221 742,217.2 742,214.6 740.9,213.3" fill="#a4a4a9"/><polygon points="726.9,217.1 740.9,213.3 742,214.6 728.1,218.4" fill="#bdbdc1"/></g><g opacity="0.62"><polygon points="582.4,155.9 598.2,153.2 598.2,156.2 582.4,159.4" fill="#88888e"/><polygon points="582.4,155.9 598.2,153.2 598.8,154.2 583,156.9" fill="#a2a2a8"/><polygon points="600.4,150.9 614.5,148.7 614.5,151.7 600.4,154.4" fill="#88888e"/><polygon points="600.4,150.9 614.5,148.7 615.1,149.7 601,151.9" fill="#a2a2a8"/><polygon points="616.8,146.9 629.2,144.8 629.2,147.8 616.8,150.4" fill="#88888e"/><polygon points="616.8,146.9 629.2,144.8 629.8,145.8 617.4,147.9" fill="#a2a2a8"/><polygon points="630.9,143.5 641.8,142 641.8,145 630.9,147" fill="#88888e"/><polygon points="630.9,143.5 641.8,142 642.4,143 631.5,144.5" fill="#a2a2a8"/></g><path d="M595.5 172.2 L660 153.3 L700 143 L729 137" stroke="#fafafa" stroke-width="0.9" fill="none"/><path d="M631 197.7 L660 184.4 L700 172 L729 166" stroke="#fafafa" stroke-width="0.9" fill="none"/><path d="M682 143.7 L729.7 161.7" stroke="#fafafa" stroke-width="0.9" fill="none"/><path d="M640 160 L668 212" stroke="#fafafa" stroke-width="0.7" fill="none"/><path d="M600 182 L612 190" stroke="#fafafa" stroke-width="0.6" fill="none"/><path d="M556 146.5 L618 190 L637.7 201" stroke="#fafafa" stroke-width="1.2" fill="none"/><g opacity="0.62"><polygon points="599,223.6 639.5,201 679,220 679,226 660,240.6 648,240.6 666,226 639.5,210 601,232" fill="#88888e"/><polygon points="599,223.6 639.5,201 679,220 674,223 639.5,206 603,227" fill="#a2a2a8"/><polygon points="667,202 714,223 714,229 667,208" fill="#88888e"/><polygon points="720,222 730,218 730,238 724,238" fill="#88888e"/></g><polygon points="608.3,172.5 613.4,171.8 613.4,176.3 608.3,177" fill="#7f9df0"/></g><text x="7.2" y="181.5" font-size="3.8" fill="#444" text-anchor="start" font-weight="bold">Bag</text><rect x="7.2" y="185.5" width="87.3" height="0.5" fill="#e3e6f0"/><text x="101.3" y="181.5" font-size="3.8" fill="#444" text-anchor="start" font-weight="bold">Sblc</text><rect x="101.3" y="185.5" width="87.3" height="0.5" fill="#e3e6f0"/><text x="7.2" y="192.3" font-size="3.5" fill="#8a93a6" text-anchor="start">ID</text><text x="94.5" y="192.3" font-size="3.5" fill="#555" text-anchor="end">0150100000044421</text><text x="7.2" y="199.9" font-size="3.5" fill="#8a93a6" text-anchor="start">Construction year</text><text x="94.5" y="199.9" font-size="3.5" fill="#555" text-anchor="end">1959</text><text x="7.2" y="207.5" font-size="3.5" fill="#8a93a6" text-anchor="start">Status</text><text x="94.5" y="207.5" font-size="3.5" fill="#555" text-anchor="end">Pand in gebruik</text><text x="7.2" y="214.9" font-size="3.5" fill="#8a93a6" text-anchor="start">Building type</text><text x="94.5" y="214.9" font-size="3.5" fill="#555" text-anchor="end">Tussen of geschakelde woning</text><text x="7.2" y="222.5" font-size="3.5" fill="#8a93a6" text-anchor="start">Type of use</text><text x="94.5" y="222.5" font-size="3.5" fill="#555" text-anchor="end">Residential</text><text x="7.2" y="229.9" font-size="3.5" fill="#8a93a6" text-anchor="start">Postal code</text><text x="94.5" y="229.9" font-size="3.5" fill="#555" text-anchor="end">7412NH</text><text x="7.2" y="237.5" font-size="3.5" fill="#8a93a6" text-anchor="start">Street name</text><text x="94.5" y="237.5" font-size="3.5" fill="#555" text-anchor="end">Brederodelaan</text><text x="7.2" y="245.1" font-size="3.5" fill="#8a93a6" text-anchor="start">House number</text><text x="94.5" y="245.1" font-size="3.5" fill="#555" text-anchor="end">22</text><text x="7.2" y="252.5" font-size="3.5" fill="#8a93a6" text-anchor="start">Source holder</text><text x="94.5" y="252.5" font-size="3.5" fill="#555" text-anchor="end">Deventer, 0150</text><text x="101.3" y="192.3" font-size="3.5" fill="#8a93a6" text-anchor="start">Gross Floor Area (BVO)</text><text x="188.6" y="192.3" font-size="3.5" fill="#555" text-anchor="end">133 m&#178;</text><text x="101.3" y="199.9" font-size="3.5" fill="#8a93a6" text-anchor="start">Gross Facade Area (BGO)</text><text x="188.6" y="199.9" font-size="3.5" fill="#555" text-anchor="end">68 m&#178;</text><text x="101.3" y="207.5" font-size="3.5" fill="#8a93a6" text-anchor="start">BGO - open</text><text x="188.6" y="207.5" font-size="3.5" fill="#555" text-anchor="end">27 m&#178;</text><text x="101.3" y="214.9" font-size="3.5" fill="#8a93a6" text-anchor="start">BGO - closed</text><text x="188.6" y="214.9" font-size="3.5" fill="#555" text-anchor="end">41 m&#178;</text><text x="101.3" y="222.5" font-size="3.5" fill="#8a93a6" text-anchor="start">Gross Roof Area (BDO)</text><text x="188.6" y="222.5" font-size="3.5" fill="#555" text-anchor="end">77 m&#178;</text><text x="101.3" y="229.9" font-size="3.5" fill="#8a93a6" text-anchor="start">BDO - open</text><text x="188.6" y="229.9" font-size="3.5" fill="#555" text-anchor="end">4 m&#178;</text><text x="101.3" y="237.5" font-size="3.5" fill="#8a93a6" text-anchor="start">BDO - closed</text><text x="188.6" y="237.5" font-size="3.5" fill="#555" text-anchor="end">73 m&#178;</text><text x="101.3" y="245.1" font-size="3.5" fill="#8a93a6" text-anchor="start">Building footprint (BBO)</text><text x="188.6" y="245.1" font-size="3.5" fill="#555" text-anchor="end">64 m&#178;</text><text x="7.2" y="262.2" font-size="3.8" fill="#444" text-anchor="start" font-weight="bold">Gas</text><rect x="7.2" y="266.6" width="87.3" height="0.5" fill="#e3e6f0"/><text x="101.3" y="262.2" font-size="3.8" fill="#444" text-anchor="start" font-weight="bold">Electricity</text><rect x="101.3" y="266.6" width="87.3" height="0.5" fill="#e3e6f0"/><text x="7.2" y="273" font-size="3.5" fill="#8a93a6" text-anchor="start">Postal code</text><text x="94.5" y="273" font-size="3.5" fill="#555" text-anchor="end">7412NH</text><text x="7.2" y="280.4" font-size="3.5" fill="#8a93a6" text-anchor="start">Product</text><text x="94.5" y="280.4" font-size="3.5" fill="#555" text-anchor="end">Gas</text><text x="7.2" y="288.2" font-size="3.5" fill="#8a93a6" text-anchor="start">Connections num</text><text x="94.5" y="288.2" font-size="3.5" fill="#555" text-anchor="end">21</text><text x="7.2" y="295.6" font-size="3.5" fill="#8a93a6" text-anchor="start">Standard annual consumption</text><text x="94.5" y="295.6" font-size="3.5" fill="#555" text-anchor="end">1.656 m&#179;</text><text x="101.3" y="273" font-size="3.5" fill="#8a93a6" text-anchor="start">Postal code</text><text x="188.6" y="273" font-size="3.5" fill="#555" text-anchor="end">7412NH</text><text x="101.3" y="280.4" font-size="3.5" fill="#8a93a6" text-anchor="start">Product</text><text x="188.6" y="280.4" font-size="3.5" fill="#555" text-anchor="end">Electricity</text><text x="101.3" y="288.2" font-size="3.5" fill="#8a93a6" text-anchor="start">Connections num</text><text x="188.6" y="288.2" font-size="3.5" fill="#555" text-anchor="end">21</text><text x="101.3" y="295.6" font-size="3.5" fill="#8a93a6" text-anchor="start">Standard annual consumption</text><text x="188.6" y="295.6" font-size="3.5" fill="#555" text-anchor="end">2.512 kWh</text><text x="7.2" y="305.5" font-size="3.8" fill="#444" text-anchor="start" font-weight="bold">Energy label</text><rect x="7.2" y="309.5" width="87.3" height="0.5" fill="#e3e6f0"/><text x="101.3" y="305.5" font-size="3.8" fill="#444" text-anchor="start" font-weight="bold">Cost of transition</text><rect x="101.3" y="309.5" width="87.3" height="0.5" fill="#e3e6f0"/><text x="7.2" y="316.3" font-size="3.5" fill="#8a93a6" text-anchor="start">Address</text><text x="94.5" y="316.3" font-size="3.5" fill="#555" text-anchor="end">7412NH, 22</text><text x="7.2" y="323.4" font-size="3.4" fill="#333" text-anchor="start" font-weight="bold">Label</text><text x="68" y="323.4" font-size="3.4" fill="#333" text-anchor="end" font-weight="bold">Temp</text><text x="94.5" y="323.4" font-size="3.4" fill="#333" text-anchor="end" font-weight="bold">Final</text><text x="7.2" y="330.2" font-size="3.4" fill="#8a93a6" text-anchor="start">E</text><text x="67" y="330.2" font-size="3.4" fill="#555" text-anchor="end">1</text><text x="94.5" y="330.2" font-size="3.4" fill="#555" text-anchor="end">0</text><text x="101.3" y="316.2" font-size="3.4" fill="#333" text-anchor="start" font-weight="bold">Label E --&gt; Label C</text><text x="101.3" y="323.5" font-size="3.5" fill="#8a93a6" text-anchor="start">Insulation of the facade (BGO)</text><text x="188.6" y="323.5" font-size="3.5" fill="#555" text-anchor="end">&#8364; 1.000</text><text x="101.3" y="330.9" font-size="3.5" fill="#8a93a6" text-anchor="start">Exchanging windows and doors (BGO open)</text><text x="188.6" y="330.9" font-size="3.5" fill="#555" text-anchor="end">&#8364; 15.250</text><text x="101.3" y="338.6" font-size="3.5" fill="#8a93a6" text-anchor="start">Insulation of the roof (BDO closed)</text><text x="188.6" y="338.6" font-size="3.5" fill="#555" text-anchor="end">&#8364; 10.750</text><text x="101.3" y="346" font-size="3.5" fill="#8a93a6" text-anchor="start">Exchanging roof windows (BDO open)</text><text x="188.6" y="346" font-size="3.5" fill="#555" text-anchor="end">&#8364; 3.000</text><text x="101.3" y="353.6" font-size="3.5" fill="#8a93a6" text-anchor="start">Insulation of the floor (BBO)</text><text x="188.6" y="353.6" font-size="3.5" fill="#555" text-anchor="end">&#8364; 2.750</text><text x="101.3" y="361.2" font-size="3.5" fill="#8a93a6" text-anchor="start">Energy installation / ventilation (BVO)</text><text x="188.6" y="361.2" font-size="3.5" fill="#555" text-anchor="end">&#8364; 2.250</text><text x="101.3" y="368.8" font-size="3.5" fill="#8a93a6" text-anchor="start">Indication of total cost</text><text x="188.6" y="368.8" font-size="3.5" fill="#555" text-anchor="end">&#8364; 35.000</text><text x="7.2" y="385.3" font-size="3.4" fill="#444" text-anchor="start" font-weight="bold">Disclaimer</text><text x="7.2" y="391.7" font-size="2.8" fill="#333" text-anchor="start" textLength="181" lengthAdjust="spacingAndGlyphs">This report is published by SBLC B.V. in Amsterdam, the Netherlands. This report is confidential and has limited validity. No part of this</text><text x="7.2" y="396.8" font-size="2.8" fill="#333" text-anchor="start" textLength="181" lengthAdjust="spacingAndGlyphs">report may be disclosed to third parties without written permission from SBLC B.V. and from the client. The information processed in this</text><text x="7.2" y="401.8" font-size="2.8" fill="#333" text-anchor="start" textLength="181" lengthAdjust="spacingAndGlyphs">report is composed of various internal and external data sources. Although we check and regularly update the data, it is possible that (part</text><text x="7.2" y="406.5" font-size="2.8" fill="#333" text-anchor="start" textLength="77" lengthAdjust="spacingAndGlyphs">of) the information used is outdated, incomplete and/or (partly) incorrect.</text><text x="98" y="413.5" font-size="2.8" fill="#8a93a6" text-anchor="middle" textLength="103" lengthAdjust="spacingAndGlyphs">Barbara Strozzilaan 101 | 1083 HN Amsterdam | email: info@sblc.nl | www.sblc.nl</text><text x="98" y="420.4" font-size="2.8" fill="#8a93a6" text-anchor="middle" textLength="100" lengthAdjust="spacingAndGlyphs">BTW: NL857162165.B01 | Bank: NL31 SNSB 0944.4180.55 | KvK: 67754752</text></svg></div>
<div id="side"><div class="hdr"><div class="logo"><svg width="86" height="21" viewBox="6 7 86 21" style="position:absolute;left:0;top:0">
<polygon points="25,10.7 28.6,13.4 25,16" fill="#ef4d23"/>
<polygon points="37.25,10.7 33.6,13.4 37.25,16" fill="#f38a1d"/>
<polygon points="25,13.5 31.1,17.4 31.1,23.6 25,20.6" fill="#ef4a24"/>
<polygon points="37.25,13.5 31.1,17.4 31.1,23.6 37.25,20.6" fill="#f7a21b"/>
<polygon points="25.8,14.8 31.1,12 36.4,14.8 31.1,17.6" fill="#2a3644"/>
<polygon points="27.2,18.6 29.3,19.8 28.4,20.4" fill="#5a2a20"/>
<polygon points="35,18.6 32.9,19.8 33.8,20.4" fill="#6a4a20"/>
<circle cx="31.1" cy="23.2" r="0.8" fill="#2a3644"/>
<text x="40.2" y="16.6" font-size="4.1" fill="#666" font-family="Liberation Sans" textLength="32.7" lengthAdjust="spacingAndGlyphs">SMART BUILDING</text>
<text x="45.1" y="20.3" font-size="4.1" fill="#666" font-family="Liberation Sans" textLength="22.9" lengthAdjust="spacingAndGlyphs">LIFE CYCLE</text>
</svg></div></div><svg width="94" height="110" style="position:absolute;left:0;top:0">
<path d="M9.2 49.5 V45.3 L13.8 41.3 L18.4 45.3 V49.5 Z M12.4 49.5 V46.6 H15.2 V49.5" stroke="#6d3c08" stroke-width="0.9" fill="none" stroke-linejoin="round"/>
<circle cx="12.8" cy="68.6" r="2.4" stroke="#6d3c08" stroke-width="0.9" fill="none"/>
<path d="M8.6 75.6 Q8.8 71.8 12.8 71.8 Q16.6 71.8 17 75.6" stroke="#6d3c08" stroke-width="0.9" fill="none"/>
<path d="M16.8 66.4 V70.6 M18.2 73.2 Q18.6 74 18.8 75.4" stroke="#6d3c08" stroke-width="0.8" fill="none"/>
<path d="M8.4 93.2 H12 L13 94.5 H18.8 V101.4 H8.4 Z" stroke="#6d3c08" stroke-width="0.9" fill="none" stroke-linejoin="round"/>
</svg><div class="nav" style="top:41.6px">Home</div><div class="nav" style="top:67.6px">Companies</div><div class="nav" style="top:93.7px">Projects</div><div class="ftr"><svg width="14" height="14" style="position:absolute;left:7px;top:9px" viewBox="0 0 14 14">
<defs><clipPath id="fc"><circle cx="6.5" cy="6.6" r="5.4"/></clipPath></defs>
<g clip-path="url(#fc)">
<rect x="0" y="0" width="14" height="14" fill="#1f3e9a"/>
<path d="M0 0 L14 14 M14 0 L0 14" stroke="#fff" stroke-width="2.2"/>
<path d="M0 0 L14 14 M14 0 L0 14" stroke="#e0243a" stroke-width="0.8"/>
<path d="M6.5 0 V14 M0 6.6 H14" stroke="#fff" stroke-width="3"/>
<path d="M6.5 0 V14 M0 6.6 H14" stroke="#e0243a" stroke-width="1.6"/>
</g></svg><div class="nav" style="left:29px;top:11.8px;color:#7e4c14;font-weight:normal;-webkit-text-stroke:0.15px #7e4c14">English</div></div></div><div class="collapse"><svg width="10" height="10" style="position:absolute;left:0;top:0"><path d="M5.6 2.6 L3.7 4.7 L5.6 6.8" stroke="#4a78f0" stroke-width="1.15" fill="none"/></svg></div>
<div id="panel"><div class="ttl">Details</div><svg width="10" height="10" style="position:absolute;left:156.5px;top:7px"><path d="M1.3 1.3 L8.2 8.2 M8.2 1.3 L1.3 8.2" stroke="#2f63f0" stroke-width="1.1"/></svg><div class="div"></div><div class="bar" style="top:33px"><span>Bag</span><i><svg width="7" height="7" style="position:absolute;left:0;top:0"><path d="M1.6 3.5 H4.8 M3.2 1.9 V5.1" stroke="#333" stroke-width="1.1"/></svg></i></div><div class="bar" style="top:50px"><span>Sblc</span><i><svg width="7" height="7" style="position:absolute;left:0;top:0"><path d="M2 3.5 H4.4" stroke="#333" stroke-width="0.9"/></svg></i></div><div class="row" style="top:72.4px"><span>Gross Floor Area (BVO)</span><b>133 m&#178;</b></div><div class="row" style="top:85.9px"><span>Gross Facade Area (BGO)</span><b>68 m&#178;</b></div><div class="row" style="top:99.5px"><span>BGO - open</span><b>27 m&#178;</b></div><div class="row" style="top:113px"><span>BGO - closed</span><b>41 m&#178;</b></div><div class="row" style="top:126.6px"><span>Gross Roof Area (BDO)</span><b>77 m&#178;</b></div><div class="row" style="top:140.2px"><span>BDO - open</span><b>4 m&#178;</b></div><div class="row" style="top:153.7px"><span>BDO - closed</span><b>73 m&#178;</b></div><div class="row" style="top:167.2px"><span>Building footprint (BBO)</span><b>64 m&#178;</b></div><div class="bar" style="top:182.8px"><span>Gas</span><i><svg width="7" height="7" style="position:absolute;left:0;top:0"><path d="M1.6 3.5 H4.8 M3.2 1.9 V5.1" stroke="#333" stroke-width="1.1"/></svg></i></div><div class="bar" style="top:199.7px"><span>Electricity</span><i><svg width="7" height="7" style="position:absolute;left:0;top:0"><path d="M1.6 3.5 H4.8 M3.2 1.9 V5.1" stroke="#333" stroke-width="1.1"/></svg></i></div><div class="bar" style="top:216.6px"><span>Energy label</span><i><svg width="7" height="7" style="position:absolute;left:0;top:0"><path d="M1.6 3.5 H4.8 M3.2 1.9 V5.1" stroke="#333" stroke-width="1.1"/></svg></i></div><div class="bar" style="top:233.5px"><span>Cost of transition</span><i><svg width="7" height="7" style="position:absolute;left:0;top:0"><path d="M1.6 3.5 H4.8 M3.2 1.9 V5.1" stroke="#333" stroke-width="1.1"/></svg></i></div></div>
</body></html>
